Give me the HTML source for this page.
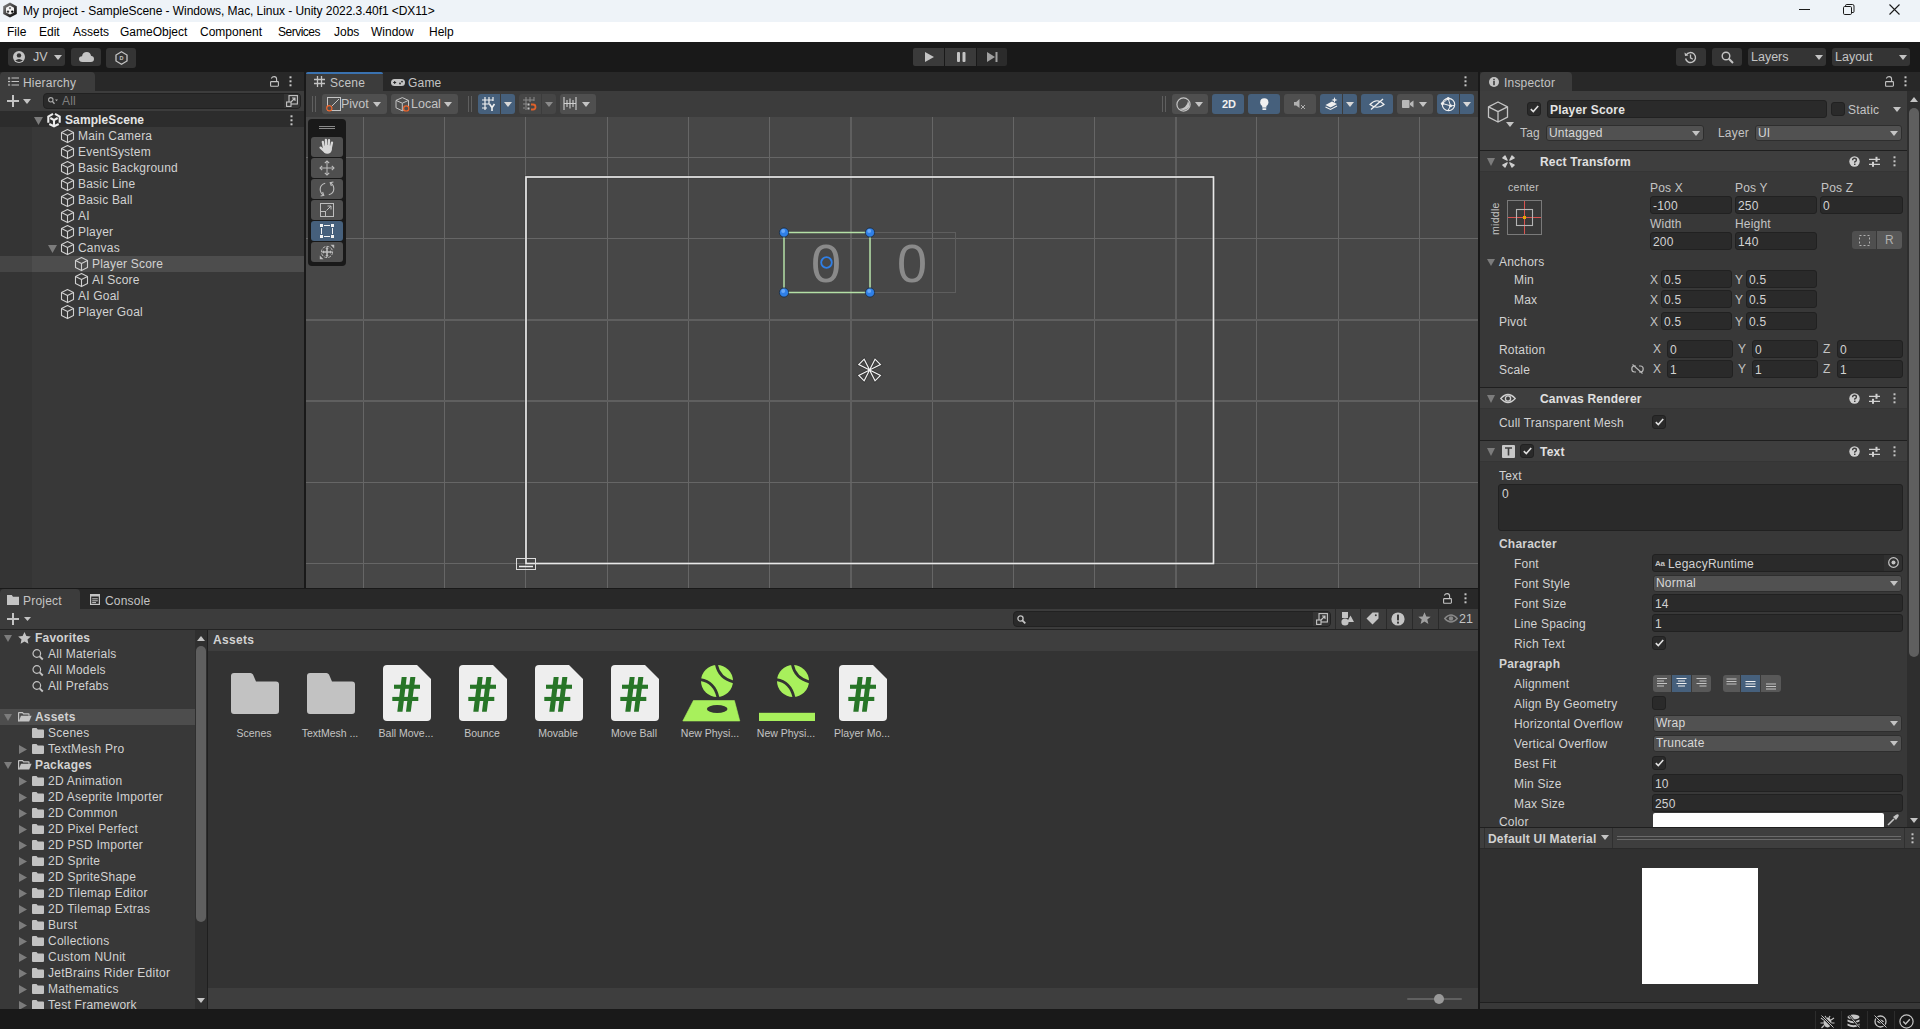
<!DOCTYPE html>
<html><head><meta charset="utf-8">
<style>
*{margin:0;padding:0;box-sizing:border-box}
html,body{width:1920px;height:1029px;overflow:hidden;background:#191919;font-family:"Liberation Sans",sans-serif}
.a{position:absolute}
.t{position:absolute;white-space:nowrap;font-size:12px;line-height:16px;color:#c4c4c4}
.b{font-weight:bold}
.fld{position:absolute;background:#2a2a2a;border:1px solid #212121;border-radius:3px}
.btn{position:absolute;background:#585858;border-radius:3px}
.dd{position:absolute;background:#515151;border:1px solid #2e2e2e;border-radius:3px}
.chk{position:absolute;width:14px;height:14px;background:#2a2a2a;border:1px solid #212121;border-radius:3px}
svg{position:absolute;overflow:visible}
</style></head><body>
<!-- title bar -->
<div class="a" style="left:0;top:0;width:1920px;height:22px;background:#eef3f8"></div>
<!-- menu bar -->
<div class="a" style="left:0;top:22px;width:1920px;height:20px;background:#ffffff"></div>
<!-- main toolbar -->
<div class="a" style="left:0;top:42px;width:1920px;height:30px;background:#191919"></div>

<!-- title content -->
<svg style="left:3px;top:2px" width="15" height="16" viewBox="0 0 15 16"><defs><linearGradient id="hg" x1="0" y1="0" x2="1" y2="1"><stop offset="0" stop-color="#8a8a8a"/><stop offset="0.55" stop-color="#3a3a3a"/><stop offset="1" stop-color="#000"/></linearGradient></defs><polygon points="7,0.6 13.8,4.3 13.8,11.9 7,15.6 0.2,11.9 0.2,4.3" fill="url(#hg)"/><polygon points="7,3.5 11,5.8 11,10.4 7,12.6 3,10.4 3,5.8" fill="#f2f2f2"/><circle cx="7" cy="6.2" r="1.1" fill="#777"/><circle cx="5" cy="9.6" r="1.2" fill="#333"/><circle cx="9.3" cy="9.6" r="1.2" fill="#000"/></svg>
<div class="t" style="left:23px;top:3px;font-size:12px;color:#000;letter-spacing:-0.06px">My project - SampleScene - Windows, Mac, Linux - Unity 2022.3.40f1 &lt;DX11&gt;</div>
<svg style="left:1799px;top:9px" width="11" height="1"><rect width="11" height="1" fill="#1a1a1a"/></svg>
<svg style="left:1843px;top:4px" width="12" height="11" viewBox="0 0 12 11"><rect x="0.5" y="2.5" width="8" height="8" rx="1.2" fill="none" stroke="#1a1a1a"/><path d="M2.5 2.5 V1.8 Q2.5 0.5 3.8 0.5 H9.5 Q11 0.5 11 2 V7.5 Q11 8.5 10 8.5 H8.5" fill="none" stroke="#1a1a1a"/></svg>
<svg style="left:1889px;top:4px" width="11" height="11" viewBox="0 0 11 11"><path d="M0.5 0.5 L10.5 10.5 M10.5 0.5 L0.5 10.5" stroke="#1a1a1a" stroke-width="1.1"/></svg>
<!-- menu -->
<div class="t" style="left:7px;top:24px;font-size:12px;color:#000">File</div>
<div class="t" style="left:39px;top:24px;font-size:12px;color:#000">Edit</div>
<div class="t" style="left:73px;top:24px;font-size:12px;color:#000">Assets</div>
<div class="t" style="left:120px;top:24px;font-size:12px;color:#000">GameObject</div>
<div class="t" style="left:200px;top:24px;font-size:12px;color:#000">Component</div>
<div class="t" style="left:278px;top:24px;font-size:12px;color:#000;letter-spacing:-0.5px">Services</div>
<div class="t" style="left:334px;top:24px;font-size:12px;color:#000">Jobs</div>
<div class="t" style="left:371px;top:24px;font-size:12px;color:#000">Window</div>
<div class="t" style="left:429px;top:24px;font-size:12px;color:#000">Help</div>
<!-- main toolbar content -->
<div class="btn" style="left:8px;top:48px;width:57px;height:18px;background:#343434"></div>
<svg style="left:13px;top:51px" width="12" height="12" viewBox="0 0 12 12"><circle cx="6" cy="6" r="6" fill="#c4c4c4"/><circle cx="6" cy="4.4" r="2.2" fill="#343434"/><path d="M2.2 9.6 Q6 6.2 9.8 9.6 Q6 12.5 2.2 9.6Z" fill="#343434"/></svg>
<div class="t" style="left:33px;top:49px;color:#c4c4c4;font-size:12.5px">JV</div>
<svg style="left:54px;top:55px" width="8" height="5"><path d="M0 0 H8 L4 5Z" fill="#c4c4c4"/></svg>
<div class="btn" style="left:71px;top:48px;width:30px;height:18px;background:#343434"></div>
<svg style="left:79px;top:52px" width="15" height="10" viewBox="0 0 15 10"><path d="M3.5 10 Q0 10 0 7 Q0 4.3 3 4.2 Q3.8 0 7.8 0 Q11.5 0 12 3.8 Q15 4.3 15 7 Q15 10 11.8 10Z" fill="#c4c4c4"/></svg>
<div class="btn" style="left:106px;top:48px;width:30px;height:20px;background:#343434"></div>
<svg style="left:115px;top:51px" width="13" height="14" viewBox="0 0 13 14"><polygon points="6.5,0.8 12,4 12,10 6.5,13.2 1,10 1,4" fill="none" stroke="#c4c4c4" stroke-width="1.3"/><text x="6.5" y="9.3" font-size="5.5" font-family="Liberation Sans" font-weight="bold" fill="#c4c4c4" text-anchor="middle">D</text></svg>
<!-- play controls -->
<div class="a" style="left:913px;top:48px;width:31px;height:18px;background:#3a3a3a;border-radius:2px 0 0 2px"></div>
<div class="a" style="left:945px;top:48px;width:31px;height:18px;background:#3a3a3a"></div>
<div class="a" style="left:977px;top:48px;width:30px;height:18px;background:#2b2b2b;border-radius:0 2px 2px 0"></div>
<svg style="left:925px;top:52px" width="9" height="10"><path d="M0 0 L9 5 L0 10Z" fill="#c4c4c4"/></svg>
<svg style="left:957px;top:52px" width="9" height="10"><rect x="0" y="0" width="3" height="10" rx="1" fill="#c4c4c4"/><rect x="5.5" y="0" width="3" height="10" rx="1" fill="#c4c4c4"/></svg>
<svg style="left:987px;top:52px" width="11" height="10"><path d="M0 0 L8 5 L0 10Z" fill="#a0a0a0"/><rect x="8.5" y="0" width="2" height="10" fill="#a0a0a0"/></svg>
<!-- right toolbar -->
<div class="btn" style="left:1676px;top:48px;width:30px;height:18px;background:#343434"></div>
<svg style="left:1684px;top:51px" width="13" height="13" viewBox="0 0 13 13"><path d="M2.2 4 A5 5 0 1 1 1.6 7.5" fill="none" stroke="#c4c4c4" stroke-width="1.4"/><path d="M0.5 1.5 L1 5 L4.5 4.5Z" fill="#c4c4c4"/><path d="M6.5 3.5 V6.8 L8.8 8.3" fill="none" stroke="#c4c4c4" stroke-width="1.3"/></svg>
<div class="btn" style="left:1712px;top:48px;width:30px;height:18px;background:#343434"></div>
<svg style="left:1721px;top:51px" width="13" height="13" viewBox="0 0 13 13"><circle cx="5" cy="5" r="3.8" fill="none" stroke="#c4c4c4" stroke-width="1.4"/><path d="M7.8 7.8 L12 12" stroke="#c4c4c4" stroke-width="2"/></svg>
<div class="btn" style="left:1748px;top:48px;width:78px;height:18px;background:#343434"></div>
<div class="t" style="left:1751px;top:49px;font-size:12.5px">Layers</div>
<svg style="left:1815px;top:55px" width="8" height="5"><path d="M0 0 H8 L4 5Z" fill="#c4c4c4"/></svg>
<div class="btn" style="left:1832px;top:48px;width:78px;height:18px;background:#343434"></div>
<div class="t" style="left:1835px;top:49px;font-size:12.5px">Layout</div>
<svg style="left:1899px;top:55px" width="8" height="5"><path d="M0 0 H8 L4 5Z" fill="#c4c4c4"/></svg>

<!-- HIERARCHY -->
<div class="a" style="left:0;top:72px;width:304px;height:19px;background:#282828"></div>
<div class="a" style="left:0;top:72px;width:95px;height:19px;background:#3c3c3c;border-radius:4px 4px 0 0"></div>
<div class="a" style="left:0;top:91px;width:304px;height:20px;background:#3c3c3c"></div>
<div class="a" style="left:0;top:111px;width:304px;height:477px;background:#383838"></div>

<!-- hierarchy content -->
<svg style="left:8px;top:77px" width="11" height="9" viewBox="0 0 11 9"><path d="M3.5 1 H11 M3.5 4.5 H11 M3.5 8 H11" stroke="#c4c4c4" stroke-width="1.1"/><path d="M1 0 V9" stroke="#c4c4c4" stroke-width="0.8" stroke-dasharray="1 1.2"/><path d="M0 1.2 H2.2 M0 4.5 H2.2 M0 8 H2.2" stroke="#c4c4c4" stroke-width="1"/></svg>
<div class="t" style="left:23px;top:75px;letter-spacing:0.2px">Hierarchy</div>
<svg style="left:270px;top:76px" width="9" height="11" viewBox="0 0 9 11"><path d="M1.3 2.4 Q2.2 0.6 4.2 0.6 Q6.6 0.6 6.6 3 V5.6" fill="none" stroke="#c4c4c4" stroke-width="1.1"/><rect x="0.6" y="5.6" width="7.8" height="4.6" rx="0.6" fill="none" stroke="#c4c4c4" stroke-width="1.1"/></svg>
<svg style="left:289px;top:76px" width="3" height="11"><rect x="0.5" y="0.3" width="2" height="2" fill="#c4c4c4"/><rect x="0.5" y="4.3" width="2" height="2" fill="#c4c4c4"/><rect x="0.5" y="8.3" width="2" height="2" fill="#c4c4c4"/></svg>
<svg style="left:7px;top:95px" width="12" height="12"><path d="M6 0 V12 M0 6 H12" stroke="#c4c4c4" stroke-width="2"/></svg>
<svg style="left:23px;top:99px" width="8" height="5"><path d="M0 0 H8 L4 5Z" fill="#c4c4c4"/></svg>
<div class="fld" style="left:43px;top:93px;width:258px;height:16px;border-radius:4px"></div>
<svg style="left:48px;top:97px" width="10" height="8" viewBox="0 0 10 8"><circle cx="2.8" cy="2.8" r="2.2" fill="none" stroke="#aaa" stroke-width="1.1"/><path d="M4.3 4.3 L6.5 6.8" stroke="#aaa" stroke-width="1.3"/><path d="M7 2.5 H10 L8.5 4.3Z" fill="#aaa"/></svg>
<div class="t" style="left:62px;top:93px;color:#7f7f7f;letter-spacing:0.2px">All</div>
<div class="a" style="left:284px;top:94px;width:16px;height:14px;background:#353535;border-radius:0 3px 3px 0"></div>
<svg style="left:286px;top:95px" width="12" height="12" viewBox="0 0 12 12"><rect x="3" y="0.6" width="8.4" height="8.4" fill="none" stroke="#c4c4c4" stroke-width="1.1"/><rect x="0.6" y="7" width="4.4" height="4.4" fill="#353535" stroke="#c4c4c4" stroke-width="1.1"/><path d="M5 7 L9 3 M6 3 H9 V6" fill="none" stroke="#c4c4c4" stroke-width="1.1"/></svg>
<div class="a" style="left:0;top:111px;width:304px;height:16px;background:#2c2c2c"></div>
<div class="a" style="left:0;top:127px;width:32px;height:461px;background:#343434"></div>
<div class="a" style="left:0;top:256px;width:32px;height:16px;background:#454545"></div>
<div class="a" style="left:32px;top:256px;width:272px;height:16px;background:#4d4d4d"></div>
<svg style="left:34px;top:117px" width="9" height="8"><path d="M0 0 H9 L4.5 8Z" fill="#7c7c7c"/></svg>
<svg style="left:47px;top:113px" width="14" height="14" viewBox="0 0 14 14"><g fill="none" stroke="#ececec" stroke-width="2.1" stroke-linejoin="miter" stroke-linecap="butt"><path d="M6 0.9 L1.3 3.5 V9.8"/><path d="M8 0.9 L12.7 3.5 V9.8"/><path d="M2.3 11 L7 13.3 L11.7 11"/><path d="M7 12.6 V7.2 L3.3 5 M7 7.2 L10.7 5"/></g></svg>
<div class="t b" style="left:65px;top:112px;color:#e4e4e4;letter-spacing:0.1px">SampleScene</div>
<svg style="left:290px;top:115px" width="3" height="11"><rect x="0.5" y="0.3" width="2" height="2" fill="#c4c4c4"/><rect x="0.5" y="4.3" width="2" height="2" fill="#c4c4c4"/><rect x="0.5" y="8.3" width="2" height="2" fill="#c4c4c4"/></svg>
<svg style="left:61px;top:129px" width="14" height="15" viewBox="0 0 14 15"><path d="M6.5 0.6 L12.5 3.6 V10.6 L6.5 13.6 L0.5 10.6 V3.6 Z M0.5 3.6 L6.5 6.6 L12.5 3.6 M6.5 6.6 V13.6" fill="none" stroke="#d0d0d0" stroke-width="1.1" stroke-linejoin="round"/></svg>
<div class="t" style="left:78px;top:128px;color:#d2d2d2;letter-spacing:0.2px">Main Camera</div>
<svg style="left:61px;top:145px" width="14" height="15" viewBox="0 0 14 15"><path d="M6.5 0.6 L12.5 3.6 V10.6 L6.5 13.6 L0.5 10.6 V3.6 Z M0.5 3.6 L6.5 6.6 L12.5 3.6 M6.5 6.6 V13.6" fill="none" stroke="#d0d0d0" stroke-width="1.1" stroke-linejoin="round"/></svg>
<div class="t" style="left:78px;top:144px;color:#d2d2d2;letter-spacing:0.2px">EventSystem</div>
<svg style="left:61px;top:161px" width="14" height="15" viewBox="0 0 14 15"><path d="M6.5 0.6 L12.5 3.6 V10.6 L6.5 13.6 L0.5 10.6 V3.6 Z M0.5 3.6 L6.5 6.6 L12.5 3.6 M6.5 6.6 V13.6" fill="none" stroke="#d0d0d0" stroke-width="1.1" stroke-linejoin="round"/></svg>
<div class="t" style="left:78px;top:160px;color:#d2d2d2;letter-spacing:0.2px">Basic Background</div>
<svg style="left:61px;top:177px" width="14" height="15" viewBox="0 0 14 15"><path d="M6.5 0.6 L12.5 3.6 V10.6 L6.5 13.6 L0.5 10.6 V3.6 Z M0.5 3.6 L6.5 6.6 L12.5 3.6 M6.5 6.6 V13.6" fill="none" stroke="#d0d0d0" stroke-width="1.1" stroke-linejoin="round"/></svg>
<div class="t" style="left:78px;top:176px;color:#d2d2d2;letter-spacing:0.2px">Basic Line</div>
<svg style="left:61px;top:193px" width="14" height="15" viewBox="0 0 14 15"><path d="M6.5 0.6 L12.5 3.6 V10.6 L6.5 13.6 L0.5 10.6 V3.6 Z M0.5 3.6 L6.5 6.6 L12.5 3.6 M6.5 6.6 V13.6" fill="none" stroke="#d0d0d0" stroke-width="1.1" stroke-linejoin="round"/></svg>
<div class="t" style="left:78px;top:192px;color:#d2d2d2;letter-spacing:0.2px">Basic Ball</div>
<svg style="left:61px;top:209px" width="14" height="15" viewBox="0 0 14 15"><path d="M6.5 0.6 L12.5 3.6 V10.6 L6.5 13.6 L0.5 10.6 V3.6 Z M0.5 3.6 L6.5 6.6 L12.5 3.6 M6.5 6.6 V13.6" fill="none" stroke="#d0d0d0" stroke-width="1.1" stroke-linejoin="round"/></svg>
<div class="t" style="left:78px;top:208px;color:#d2d2d2;letter-spacing:0.2px">AI</div>
<svg style="left:61px;top:225px" width="14" height="15" viewBox="0 0 14 15"><path d="M6.5 0.6 L12.5 3.6 V10.6 L6.5 13.6 L0.5 10.6 V3.6 Z M0.5 3.6 L6.5 6.6 L12.5 3.6 M6.5 6.6 V13.6" fill="none" stroke="#d0d0d0" stroke-width="1.1" stroke-linejoin="round"/></svg>
<div class="t" style="left:78px;top:224px;color:#d2d2d2;letter-spacing:0.2px">Player</div>
<svg style="left:61px;top:241px" width="14" height="15" viewBox="0 0 14 15"><path d="M6.5 0.6 L12.5 3.6 V10.6 L6.5 13.6 L0.5 10.6 V3.6 Z M0.5 3.6 L6.5 6.6 L12.5 3.6 M6.5 6.6 V13.6" fill="none" stroke="#d0d0d0" stroke-width="1.1" stroke-linejoin="round"/></svg>
<div class="t" style="left:78px;top:240px;color:#d2d2d2;letter-spacing:0.2px">Canvas</div>
<svg style="left:75px;top:257px" width="14" height="15" viewBox="0 0 14 15"><path d="M6.5 0.6 L12.5 3.6 V10.6 L6.5 13.6 L0.5 10.6 V3.6 Z M0.5 3.6 L6.5 6.6 L12.5 3.6 M6.5 6.6 V13.6" fill="none" stroke="#d0d0d0" stroke-width="1.1" stroke-linejoin="round"/></svg>
<div class="t" style="left:92px;top:256px;color:#d2d2d2;letter-spacing:0.2px">Player Score</div>
<svg style="left:75px;top:273px" width="14" height="15" viewBox="0 0 14 15"><path d="M6.5 0.6 L12.5 3.6 V10.6 L6.5 13.6 L0.5 10.6 V3.6 Z M0.5 3.6 L6.5 6.6 L12.5 3.6 M6.5 6.6 V13.6" fill="none" stroke="#d0d0d0" stroke-width="1.1" stroke-linejoin="round"/></svg>
<div class="t" style="left:92px;top:272px;color:#d2d2d2;letter-spacing:0.2px">AI Score</div>
<svg style="left:61px;top:289px" width="14" height="15" viewBox="0 0 14 15"><path d="M6.5 0.6 L12.5 3.6 V10.6 L6.5 13.6 L0.5 10.6 V3.6 Z M0.5 3.6 L6.5 6.6 L12.5 3.6 M6.5 6.6 V13.6" fill="none" stroke="#d0d0d0" stroke-width="1.1" stroke-linejoin="round"/></svg>
<div class="t" style="left:78px;top:288px;color:#d2d2d2;letter-spacing:0.2px">AI Goal</div>
<svg style="left:61px;top:305px" width="14" height="15" viewBox="0 0 14 15"><path d="M6.5 0.6 L12.5 3.6 V10.6 L6.5 13.6 L0.5 10.6 V3.6 Z M0.5 3.6 L6.5 6.6 L12.5 3.6 M6.5 6.6 V13.6" fill="none" stroke="#d0d0d0" stroke-width="1.1" stroke-linejoin="round"/></svg>
<div class="t" style="left:78px;top:304px;color:#d2d2d2;letter-spacing:0.2px">Player Goal</div>
<svg style="left:48px;top:245px" width="9" height="8"><path d="M0 0 H9 L4.5 8Z" fill="#7c7c7c"/></svg>

<!-- SCENE -->
<div class="a" style="left:306px;top:72px;width:1172px;height:19px;background:#282828"></div>
<div class="a" style="left:306px;top:72px;width:77px;height:19px;background:#3c3c3c;border-radius:4px 4px 0 0"></div>
<div class="a" style="left:306px;top:91px;width:1172px;height:25px;background:#3c3c3c"></div>
<div class="a" style="left:306px;top:116px;width:1172px;height:472px;background:#474747"></div>

<!-- scene tabs -->
<div class="a" style="left:306px;top:72px;width:77px;height:2px;background:#3a72b0;border-radius:3px 3px 0 0"></div>
<svg style="left:314px;top:76px" width="11" height="11" viewBox="0 0 11 11"><path d="M3.5 0 V11 M7.5 0 V11 M0 3.5 H11 M0 7.5 H11" stroke="#c4c4c4" stroke-width="1.3"/></svg>
<div class="t" style="left:330px;top:75px;letter-spacing:0.2px">Scene</div>
<svg style="left:391px;top:79px" width="14" height="7" viewBox="0 0 14 7"><path d="M3.5 0 H10.5 Q14 0 14 3.5 Q14 7 10.5 7 H3.5 Q0 7 0 3.5 Q0 0 3.5 0Z" fill="#c4c4c4"/><path d="M2.2 3.5 H5.2 M3.7 2 V5" stroke="#282828" stroke-width="1"/><circle cx="9" cy="4.5" r="0.9" fill="#282828"/><circle cx="11" cy="2.6" r="0.9" fill="#282828"/></svg>
<div class="t" style="left:408px;top:75px;letter-spacing:0.2px">Game</div>
<svg style="left:1464px;top:76px" width="3" height="11"><rect x="0.5" y="0.3" width="2" height="2" fill="#c4c4c4"/><rect x="0.5" y="4.3" width="2" height="2" fill="#c4c4c4"/><rect x="0.5" y="8.3" width="2" height="2" fill="#c4c4c4"/></svg>
<!-- scene toolbar -->
<svg style="left:312px;top:96px" width="4" height="16"><path d="M0.5 0 V16 M3.5 0 V16" stroke="#5f5f5f" stroke-width="1"/></svg>
<div class="btn" style="left:322px;top:94px;width:65px;height:20px;background:#4f4f4f"></div>
<svg style="left:326px;top:97px" width="15" height="15" viewBox="0 0 15 15"><rect x="1.5" y="0.5" width="13" height="13" fill="none" stroke="#c4c4c4" stroke-width="1"/><path d="M5 10 L13 2" stroke="#c4c4c4" stroke-width="1"/><circle cx="3.3" cy="11.3" r="2.6" fill="#4f4f4f" stroke="#f0652a" stroke-width="1.2"/></svg>
<div class="t" style="left:341px;top:96px;font-size:12.5px">Pivot</div>
<svg style="left:373px;top:102px" width="8" height="5"><path d="M0 0 H8 L4.0 5Z" fill="#c4c4c4"/></svg>
<div class="btn" style="left:391px;top:94px;width:67px;height:20px;background:#4f4f4f"></div>
<svg style="left:395px;top:97px" width="15" height="15" viewBox="0 0 15 15"><path d="M7.3 0.6 L13.5 3.4 V10.8 L7.3 13.8 L1 10.8 V3.4 Z M1 3.4 L7.3 6.2 L13.5 3.4 M7.3 6.2 V13.8" fill="none" stroke="#c4c4c4" stroke-width="1"/><circle cx="11.2" cy="11.4" r="2.6" fill="#4f4f4f" stroke="#f0652a" stroke-width="1.2"/></svg>
<div class="t" style="left:411px;top:96px;font-size:12.5px">Local</div>
<svg style="left:444px;top:102px" width="8" height="5"><path d="M0 0 H8 L4.0 5Z" fill="#c4c4c4"/></svg>
<svg style="left:468px;top:96px" width="4" height="16"><path d="M0.5 0 V16 M3.5 0 V16" stroke="#5f5f5f" stroke-width="1"/></svg>
<div class="a" style="left:478px;top:94px;width:22px;height:20px;background:#46607c;border-radius:3px 0 0 3px"></div>
<div class="a" style="left:501px;top:94px;width:14px;height:20px;background:#46607c;border-radius:0 3px 3px 0"></div>
<svg style="left:482px;top:97px" width="14" height="14" viewBox="0 0 14 14"><path d="M3 0 V13 M7 0 V7 M11 0 V4 M0 3 H11 M0 7 H7 M0 11 H5" stroke="#f0f0f0" stroke-width="1.2"/><path d="M7.5 7 L10 10.5 L12.5 7 M10 10.5 V14" fill="none" stroke="#f0f0f0" stroke-width="1.6"/></svg>
<svg style="left:504px;top:102px" width="8" height="5"><path d="M0 0 H8 L4.0 5Z" fill="#d8d8d8"/></svg>
<div class="a" style="left:519px;top:94px;width:22px;height:20px;background:#464646;border-radius:3px 0 0 3px"></div>
<div class="a" style="left:542px;top:94px;width:14px;height:20px;background:#464646;border-radius:0 3px 3px 0"></div>
<svg style="left:523px;top:97px" width="14" height="14" viewBox="0 0 14 14"><path d="M3 0 V13 M7 0 V5 M11 0 V4 M0 3 H11 M0 7 H4 M0 11 H2" stroke="#8a8a8a" stroke-width="1"/><rect x="4.5" y="6.5" width="2" height="2" fill="#c4c4c4"/><rect x="4.5" y="10.5" width="2" height="2" fill="#c4c4c4"/><path d="M8 7.5 H10 Q12.5 7.5 12.5 10 Q12.5 12.5 10 12.5 H8" fill="none" stroke="#e0612a" stroke-width="1.8"/></svg>
<svg style="left:545px;top:102px" width="8" height="5"><path d="M0 0 H8 L4.0 5Z" fill="#8a8a8a"/></svg>
<div class="btn" style="left:560px;top:94px;width:36px;height:20px;background:#4f4f4f"></div>
<svg style="left:563px;top:97px" width="14" height="14" viewBox="0 0 14 14"><path d="M1 0 V13 M13 0 V13 M4 3 V10 M7 1.5 V11.5 M10 3 V10 M1 6.5 H13" stroke="#d0d0d0" stroke-width="1.1"/></svg>
<svg style="left:582px;top:102px" width="8" height="5"><path d="M0 0 H8 L4.0 5Z" fill="#c4c4c4"/></svg>
<!-- scene right toolbar -->
<svg style="left:1162px;top:96px" width="4" height="16"><path d="M0.5 0 V16 M3.5 0 V16" stroke="#5f5f5f" stroke-width="1"/></svg>
<div class="btn" style="left:1172px;top:94px;width:36px;height:20px;background:#4f4f4f"></div>
<svg style="left:1176px;top:97px" width="15" height="15" viewBox="0 0 15 15"><circle cx="7.5" cy="7.5" r="6.6" fill="none" stroke="#c4c4c4" stroke-width="1.2"/><path d="M3 12 Q11 11 12 4 Q14.5 8 12.5 11 Q9 14.5 3 12Z" fill="#c4c4c4"/></svg>
<svg style="left:1195px;top:102px" width="8" height="5"><path d="M0 0 H8 L4.0 5Z" fill="#c4c4c4"/></svg>
<div class="a" style="left:1212px;top:94px;width:32px;height:20px;background:#46607c;border-radius:3px"></div>
<div class="t b" style="left:1222px;top:96px;font-size:11px;color:#f0f0f0">2D</div>
<div class="a" style="left:1248px;top:94px;width:32px;height:20px;background:#46607c;border-radius:3px"></div>
<svg style="left:1260px;top:97px" width="9" height="14" viewBox="0 0 9 14"><circle cx="4.3" cy="5.3" r="4.1" fill="#f0f0f0"/><path d="M2.2 7 H6.4 V10.6 H2.2Z" fill="#f0f0f0"/><rect x="2.2" y="11.2" width="4.2" height="1.8" rx="0.9" fill="#f0f0f0"/></svg>
<div class="btn" style="left:1284px;top:94px;width:32px;height:20px;background:#4f4f4f"></div>
<svg style="left:1294px;top:99px" width="12" height="11" viewBox="0 0 12 11"><path d="M0 3 H2.2 L5.5 0 V9 L2.2 6.5 H0Z" fill="#b0b0b0"/><path d="M7 6 L11 10 M11 6 L7 10" stroke="#b0b0b0" stroke-width="1"/></svg>
<div class="a" style="left:1320px;top:94px;width:22px;height:20px;background:#46607c;border-radius:3px 0 0 3px"></div>
<div class="a" style="left:1343px;top:94px;width:14px;height:20px;background:#46607c;border-radius:0 3px 3px 0"></div>
<svg style="left:1325px;top:97px" width="13" height="13" viewBox="0 0 13 13"><path d="M0.5 8 L5.5 10.5 L12 7 L7 4.5Z" fill="#f0f0f0"/><path d="M0.5 10 L5.5 12.5 L12 9" fill="none" stroke="#f0f0f0" stroke-width="1.1"/><path d="M9.5 0 L10.3 2.2 L12.5 3 L10.3 3.8 L9.5 6 L8.7 3.8 L6.5 3 L8.7 2.2Z" fill="#f0f0f0"/></svg>
<svg style="left:1346px;top:102px" width="8" height="5"><path d="M0 0 H8 L4.0 5Z" fill="#d8d8d8"/></svg>
<div class="a" style="left:1361px;top:94px;width:32px;height:20px;background:#46607c;border-radius:3px"></div>
<svg style="left:1369px;top:98px" width="16" height="12" viewBox="0 0 16 12"><path d="M1 6.5 Q8 -1 15 6.5 Q8 12 1 6.5Z" fill="none" stroke="#f0f0f0" stroke-width="1.2"/><path d="M2 11.5 L14 1" stroke="#f0f0f0" stroke-width="1.3"/></svg>
<div class="btn" style="left:1397px;top:94px;width:36px;height:20px;background:#4f4f4f"></div>
<svg style="left:1402px;top:99px" width="12" height="10" viewBox="0 0 12 10"><rect x="0" y="1" width="7.5" height="8" rx="0.8" fill="#b8b8b8"/><path d="M8 4 L11.5 1.5 V8.5 L8 6Z" fill="#b8b8b8"/></svg>
<svg style="left:1419px;top:102px" width="8" height="5"><path d="M0 0 H8 L4.0 5Z" fill="#c4c4c4"/></svg>
<div class="a" style="left:1437px;top:94px;width:22px;height:20px;background:#46607c;border-radius:3px 0 0 3px"></div>
<div class="a" style="left:1460px;top:94px;width:14px;height:20px;background:#46607c;border-radius:0 3px 3px 0"></div>
<svg style="left:1441px;top:97px" width="15" height="15" viewBox="0 0 15 15"><circle cx="7.5" cy="7.5" r="6.2" fill="none" stroke="#f0f0f0" stroke-width="1.2"/><path d="M7.2 1.5 L9.5 8.8 L1.5 6.5 Z M9.5 8.8 L7 13.6 M9.5 8.8 L13.6 8.5" fill="none" stroke="#f0f0f0" stroke-width="1"/><circle cx="7.2" cy="1.6" r="1.6" fill="#f0f0f0"/><circle cx="1.5" cy="6.5" r="1.6" fill="#f0f0f0"/><circle cx="9.5" cy="8.8" r="1.5" fill="#f0f0f0"/></svg>
<svg style="left:1463px;top:102px" width="8" height="5"><path d="M0 0 H8 L4.0 5Z" fill="#d8d8d8"/></svg>
<svg style="left:306px;top:116px" width="1172" height="472"><line x1="57.5" y1="0" x2="57.5" y2="472" stroke="#666666" stroke-width="1"/><line x1="138.5" y1="0" x2="138.5" y2="472" stroke="#666666" stroke-width="1"/><line x1="219.5" y1="0" x2="219.5" y2="472" stroke="#666666" stroke-width="1"/><line x1="301.5" y1="0" x2="301.5" y2="472" stroke="#666666" stroke-width="1"/><line x1="382.5" y1="0" x2="382.5" y2="472" stroke="#666666" stroke-width="1"/><line x1="463.5" y1="0" x2="463.5" y2="472" stroke="#666666" stroke-width="1"/><line x1="545" y1="0" x2="545" y2="472" stroke="#5f5f5f" stroke-width="2"/><line x1="626.5" y1="0" x2="626.5" y2="472" stroke="#666666" stroke-width="1"/><line x1="707.5" y1="0" x2="707.5" y2="472" stroke="#666666" stroke-width="1"/><line x1="788.5" y1="0" x2="788.5" y2="472" stroke="#666666" stroke-width="1"/><line x1="870" y1="0" x2="870" y2="472" stroke="#5f5f5f" stroke-width="2"/><line x1="950.5" y1="0" x2="950.5" y2="472" stroke="#666666" stroke-width="1"/><line x1="1032.5" y1="0" x2="1032.5" y2="472" stroke="#666666" stroke-width="1"/><line x1="1113.5" y1="0" x2="1113.5" y2="472" stroke="#666666" stroke-width="1"/><line x1="0" y1="41.5" x2="1172" y2="41.5" stroke="#666666" stroke-width="1"/><line x1="0" y1="122.5" x2="1172" y2="122.5" stroke="#666666" stroke-width="1"/><line x1="0" y1="204" x2="1172" y2="204" stroke="#5f5f5f" stroke-width="2"/><line x1="0" y1="285" x2="1172" y2="285" stroke="#5f5f5f" stroke-width="2"/><line x1="0" y1="366.5" x2="1172" y2="366.5" stroke="#666666" stroke-width="1"/><line x1="0" y1="447.5" x2="1172" y2="447.5" stroke="#666666" stroke-width="1"/><rect x="220" y="61" width="687.5" height="386.5" fill="none" stroke="#303030" stroke-opacity="0.3" stroke-width="3.6"/><rect x="220" y="61" width="687.5" height="386.5" fill="none" stroke="#e8e8e8" stroke-width="1.7"/><rect x="564.5" y="116.5" width="85" height="60" fill="none" stroke="#5e5e5e" stroke-width="1"/><text x="520" y="166" font-family="Liberation Sans" font-size="54" fill="#8a8a8a" text-anchor="middle">0</text><text x="606" y="166" font-family="Liberation Sans" font-size="54" fill="#8a8a8a" text-anchor="middle">0</text><rect x="478" y="116.5" width="86" height="60" fill="none" stroke="#b4e0a6" stroke-width="1.5"/><circle cx="478" cy="116.5" r="4.6" fill="#2f7fe6" stroke="#1a2a3a" stroke-width="0.8"/><circle cx="477.2" cy="115.0" r="2" fill="#7fb8ff" opacity="0.7"/><circle cx="564" cy="116.5" r="4.6" fill="#2f7fe6" stroke="#1a2a3a" stroke-width="0.8"/><circle cx="563.2" cy="115.0" r="2" fill="#7fb8ff" opacity="0.7"/><circle cx="478" cy="176.5" r="4.6" fill="#2f7fe6" stroke="#1a2a3a" stroke-width="0.8"/><circle cx="477.2" cy="175.0" r="2" fill="#7fb8ff" opacity="0.7"/><circle cx="564" cy="176.5" r="4.6" fill="#2f7fe6" stroke="#1a2a3a" stroke-width="0.8"/><circle cx="563.2" cy="175.0" r="2" fill="#7fb8ff" opacity="0.7"/><circle cx="520.5" cy="146.5" r="5.3" fill="none" stroke="#2f7fe6" stroke-width="1.8"/><g transform="translate(563.6,254)" fill="none" stroke-linejoin="miter"><path d="M0 0 L-3.8 -11.5 L3.8 -11.5 Z" transform="rotate(-45)" stroke="#222" stroke-opacity="0.5" stroke-width="2.6"/><path d="M0 0 L-3.8 -11.5 L3.8 -11.5 Z" transform="rotate(45)" stroke="#222" stroke-opacity="0.5" stroke-width="2.6"/><path d="M0 0 L-3.8 -11.5 L3.8 -11.5 Z" transform="rotate(135)" stroke="#222" stroke-opacity="0.5" stroke-width="2.6"/><path d="M0 0 L-3.8 -11.5 L3.8 -11.5 Z" transform="rotate(225)" stroke="#222" stroke-opacity="0.5" stroke-width="2.6"/><path d="M0 0 L-3.8 -11.5 L3.8 -11.5 Z" transform="rotate(-45)" stroke="#f2f2f2" stroke-width="1.2"/><path d="M0 0 L-3.8 -11.5 L3.8 -11.5 Z" transform="rotate(45)" stroke="#f2f2f2" stroke-width="1.2"/><path d="M0 0 L-3.8 -11.5 L3.8 -11.5 Z" transform="rotate(135)" stroke="#f2f2f2" stroke-width="1.2"/><path d="M0 0 L-3.8 -11.5 L3.8 -11.5 Z" transform="rotate(225)" stroke="#f2f2f2" stroke-width="1.2"/></g><rect x="210.5" y="442.5" width="19" height="11" fill="none" stroke="#dcdcdc" stroke-width="1"/><path d="M213 450.5 H227" stroke="#eee" stroke-width="1.5"/></svg>
<div class="a" style="left:306px;top:116px;width:1172px;height:1px;background:#3c3c3c"></div>
<div class="a" style="left:308px;top:119px;width:38px;height:147px;background:#191919;border-radius:4px"></div>
<svg style="left:319px;top:126px" width="16" height="3"><path d="M0 0.5 H16 M0 2.5 H16" stroke="#8a8a8a" stroke-width="1"/></svg>
<div class="a" style="left:311px;top:137px;width:32px;height:20px;background:#4f4f4f;border-radius:3px"></div>
<div class="a" style="left:311px;top:158px;width:32px;height:20px;background:#4f4f4f;border-radius:3px"></div>
<div class="a" style="left:311px;top:179px;width:32px;height:20px;background:#4f4f4f;border-radius:3px"></div>
<div class="a" style="left:311px;top:200px;width:32px;height:20px;background:#4f4f4f;border-radius:3px"></div>
<div class="a" style="left:311px;top:221px;width:32px;height:20px;background:#46607c;border-radius:3px"></div>
<div class="a" style="left:311px;top:242px;width:32px;height:20px;background:#4f4f4f;border-radius:3px"></div>
<svg style="left:319px;top:138px" width="16" height="17" viewBox="0 0 16 17"><ellipse cx="8.3" cy="11.3" rx="4.6" ry="4.4" fill="#d8d8d8"/><g stroke="#d8d8d8" stroke-width="2.3" stroke-linecap="round"><path d="M5 10 L3.8 3.8"/><path d="M7.2 9 L6.9 1.8"/><path d="M9.6 9 L10 2.2"/><path d="M11.8 10 L13 4.6"/><path d="M4.6 12.5 L1.6 9.6"/></g></svg>
<svg style="left:319px;top:160px" width="16" height="16" viewBox="0 0 16 16"><path d="M8 1 V15 M1 8 H15" stroke="#bdbdbd" stroke-width="1"/><path d="M5.8 3.2 L8 1 L10.2 3.2 M5.8 12.8 L8 15 L10.2 12.8 M3.2 5.8 L1 8 L3.2 10.2 M12.8 5.8 L15 8 L12.8 10.2" fill="none" stroke="#bdbdbd" stroke-width="1.1"/></svg>
<svg style="left:319px;top:181px" width="16" height="16" viewBox="0 0 16 16"><path d="M6.2 2.2 Q1.2 3.6 1.2 8.2 Q1.2 12.2 4.8 14.2" fill="none" stroke="#bdbdbd" stroke-width="1.1"/><path d="M9.8 13.8 Q14.8 12.4 14.8 7.8 Q14.8 3.8 11.2 1.8" fill="none" stroke="#bdbdbd" stroke-width="1.1"/><path d="M3.6 11 L4.8 14.4 L1.6 15" fill="none" stroke="#bdbdbd" stroke-width="1.1"/><path d="M12.4 5 L11.2 1.6 L14.4 1" fill="none" stroke="#bdbdbd" stroke-width="1.1"/></svg>
<svg style="left:320px;top:203px" width="14" height="14" viewBox="0 0 14 14"><rect x="0.5" y="0.5" width="13" height="13" fill="none" stroke="#bdbdbd" stroke-width="1"/><rect x="0.5" y="8.5" width="5" height="5" fill="none" stroke="#bdbdbd" stroke-width="1"/><path d="M6.5 7.5 L11 3 M7.5 3 H11 V6.5" fill="none" stroke="#bdbdbd" stroke-width="1"/></svg>
<svg style="left:319px;top:223px" width="16" height="16" viewBox="0 0 16 16"><g fill="#f2f2f2"><rect x="1" y="1" width="3" height="3"/><rect x="12" y="1" width="3" height="3"/><rect x="1" y="12" width="3" height="3"/><rect x="12" y="12" width="3" height="3"/></g><path d="M5 2.5 H11 M5 13.5 H11 M2.5 5 V11 M13.5 5 V11" stroke="#f2f2f2" stroke-width="1"/></svg>
<svg style="left:319px;top:244px" width="16" height="16" viewBox="0 0 16 16"><circle cx="8" cy="8" r="5.6" fill="none" stroke="#bdbdbd" stroke-width="1" stroke-dasharray="3 1.2"/><path d="M8 3.5 V12.5 M3.5 8 H12.5" stroke="#bdbdbd" stroke-width="1.6"/><path d="M6.3 5 L8 3 L9.7 5Z M6.3 11 L8 13 L9.7 11Z M5 6.3 L3 8 L5 9.7Z M11 6.3 L13 8 L11 9.7Z" fill="#bdbdbd"/><path d="M11.5 0.8 H15.2 V4.5Z M0.8 11.5 V15.2 H4.5Z" fill="#bdbdbd"/></svg>
<!-- PROJECT -->
<div class="a" style="left:0;top:589px;width:1478px;height:20px;background:#282828"></div>
<div class="a" style="left:0;top:589px;width:80px;height:20px;background:#3c3c3c;border-radius:4px 4px 0 0"></div>
<div class="a" style="left:0;top:609px;width:1478px;height:20px;background:#3c3c3c"></div>
<div class="a" style="left:0;top:630px;width:195px;height:379px;background:#383838"></div>
<div class="a" style="left:208px;top:630px;width:1270px;height:21px;background:#3e3e3e"></div>
<div class="a" style="left:208px;top:651px;width:1270px;height:337px;background:#333333"></div>
<div class="a" style="left:208px;top:988px;width:1270px;height:21px;background:#3e3e3e"></div>

<!-- project tabs -->
<svg style="left:7px;top:595px" width="12" height="10" viewBox="0 0 12 10"><path d="M0 0 H4.8 L6 1.8 H12 V10 H0Z" fill="#c4c4c4"/></svg>
<div class="t" style="left:23px;top:593px;letter-spacing:0.2px">Project</div>
<svg style="left:90px;top:594px" width="10" height="11" viewBox="0 0 10 11"><rect x="0.6" y="0.6" width="8.8" height="9.8" fill="none" stroke="#c4c4c4" stroke-width="1.2"/><rect x="0" y="0" width="10" height="2.5" fill="#c4c4c4"/><path d="M2.2 4.8 H7.8 M2.2 6.8 H7.8 M2.2 8.6 H6" stroke="#c4c4c4" stroke-width="1"/></svg>
<div class="t" style="left:105px;top:593px;letter-spacing:0.2px">Console</div>
<svg style="left:1443px;top:593px" width="9" height="11" viewBox="0 0 9 11"><path d="M1.3 2.4 Q2.2 0.6 4.2 0.6 Q6.6 0.6 6.6 3 V5.6" fill="none" stroke="#c4c4c4" stroke-width="1.1"/><rect x="0.6" y="5.6" width="7.8" height="4.6" rx="0.6" fill="none" stroke="#c4c4c4" stroke-width="1.1"/></svg><svg style="left:1464px;top:593px" width="3" height="11"><rect x="0.5" y="0.3" width="2" height="2" fill="#c4c4c4"/><rect x="0.5" y="4.3" width="2" height="2" fill="#c4c4c4"/><rect x="0.5" y="8.3" width="2" height="2" fill="#c4c4c4"/></svg>
<svg style="left:7px;top:613px" width="12" height="12"><path d="M6 0 V12 M0 6 H12" stroke="#c4c4c4" stroke-width="2"/></svg>
<svg style="left:24px;top:617px" width="7" height="4"><path d="M0 0 H7 L3.5 4Z" fill="#c4c4c4"/></svg>
<div class="fld" style="left:1013px;top:611px;width:318px;height:16px;border-radius:4px"></div>
<svg style="left:1017px;top:615px" width="9" height="9" viewBox="0 0 9 9"><circle cx="3.5" cy="3.5" r="2.6" fill="none" stroke="#c4c4c4" stroke-width="1.3"/><path d="M5.3 5.3 L8.3 8.3" stroke="#c4c4c4" stroke-width="1.8"/></svg>
<div class="a" style="left:1313px;top:612px;width:17px;height:14px;background:#353535;border-radius:0 3px 3px 0"></div>
<svg style="left:1316px;top:613px" width="12" height="12" viewBox="0 0 12 12"><rect x="3" y="0.6" width="8.4" height="8.4" fill="none" stroke="#c4c4c4" stroke-width="1.1"/><rect x="0.6" y="7" width="4.4" height="4.4" fill="#353535" stroke="#c4c4c4" stroke-width="1.1"/><path d="M5 7 L9 3 M6 3 H9 V6" fill="none" stroke="#c4c4c4" stroke-width="1.1"/></svg>
<div class="a" style="left:1335px;top:609px;width:1px;height:20px;background:#2a2a2a"></div>
<svg style="left:1341px;top:612px" width="13" height="14" viewBox="0 0 13 14"><rect x="1" y="0" width="6" height="6" fill="#c4c4c4"/><circle cx="4" cy="10" r="3.6" fill="#c4c4c4"/><path d="M9.5 3.5 L13 10 H6Z" fill="#c4c4c4"/></svg>
<div class="a" style="left:1360px;top:609px;width:1px;height:20px;background:#2a2a2a"></div>
<svg style="left:1366px;top:612px" width="13" height="13" viewBox="0 0 13 13"><path d="M6.5 0.5 H12.5 V6.5 L6.5 12.5 L0.5 6.5Z" fill="#c4c4c4"/><circle cx="9.8" cy="3.2" r="1" fill="#3c3c3c"/></svg>
<div class="a" style="left:1386px;top:609px;width:1px;height:20px;background:#2a2a2a"></div>
<svg style="left:1391px;top:612px" width="14" height="14" viewBox="0 0 14 14"><circle cx="7" cy="7" r="6.6" fill="#c4c4c4"/><rect x="6" y="2.6" width="2" height="5.8" fill="#3c3c3c"/><rect x="6" y="9.6" width="2" height="2" fill="#3c3c3c"/></svg>
<div class="a" style="left:1412px;top:609px;width:1px;height:20px;background:#2a2a2a"></div>
<svg style="left:1418px;top:612px" width="13" height="13" viewBox="0 0 13 13"><path d="M6.5 0.3 L8.3 4.4 L12.7 4.7 L9.3 7.6 L10.4 12 L6.5 9.6 L2.6 12 L3.7 7.6 L0.3 4.7 L4.7 4.4Z" fill="#a0a0a0"/></svg>
<div class="a" style="left:1438px;top:609px;width:1px;height:20px;background:#2a2a2a"></div>
<svg style="left:1444px;top:614px" width="14" height="9" viewBox="0 0 14 9"><path d="M0.7 4.5 Q7 -2.5 13.3 4.5 Q7 11.5 0.7 4.5Z" fill="none" stroke="#888" stroke-width="1.3"/><circle cx="7" cy="4.5" r="2.2" fill="#888"/></svg>
<div class="t" style="left:1459px;top:611px;color:#c4c4c4;font-size:12.5px">21</div>
<div class="a" style="left:0;top:629px;width:1478px;height:1px;background:#232323"></div>
<!-- project tree -->
<div class="a" style="left:195px;top:630px;width:12px;height:379px;background:#2f2f2f"></div>
<div class="a" style="left:207px;top:630px;width:1px;height:379px;background:#1f1f1f"></div>
<svg style="left:197px;top:636px" width="8" height="5"><path d="M0 5 H8 L4 0Z" fill="#c4c4c4"/></svg>
<div class="a" style="left:196px;top:646px;width:10px;height:276px;background:#5f5f5f;border-radius:5px"></div>
<svg style="left:197px;top:998px" width="8" height="5"><path d="M0 0 H8 L4 5Z" fill="#c4c4c4"/></svg>
<div class="a" style="left:0;top:709px;width:195px;height:16px;background:#4d4d4d"></div>
<svg style="left:4px;top:635px" width="8" height="7"><path d="M0 0 H8 L4.0 7Z" fill="#7c7c7c"/></svg><svg style="left:18px;top:632px" width="13" height="12" viewBox="0 0 13 12"><path d="M6.5 0 L8.4 4 L12.8 4.5 L9.5 7.4 L10.4 11.8 L6.5 9.6 L2.6 11.8 L3.5 7.4 L0.2 4.5 L4.6 4Z" fill="#c4c4c4"/></svg>
<div class="t b" style="left:35px;top:630px;color:#d2d2d2;letter-spacing:0.2px">Favorites</div>
<svg style="left:32px;top:649px" width="12" height="11" viewBox="0 0 12 11"><circle cx="4.8" cy="4.5" r="3.8" fill="none" stroke="#c4c4c4" stroke-width="1.2"/><path d="M7.6 7.3 L10.8 10.5" stroke="#c4c4c4" stroke-width="1.8"/></svg><div class="t" style="left:48px;top:646px;color:#d2d2d2;letter-spacing:0.25px">All Materials</div>
<svg style="left:32px;top:665px" width="12" height="11" viewBox="0 0 12 11"><circle cx="4.8" cy="4.5" r="3.8" fill="none" stroke="#c4c4c4" stroke-width="1.2"/><path d="M7.6 7.3 L10.8 10.5" stroke="#c4c4c4" stroke-width="1.8"/></svg><div class="t" style="left:48px;top:662px;color:#d2d2d2;letter-spacing:0.25px">All Models</div>
<svg style="left:32px;top:681px" width="12" height="11" viewBox="0 0 12 11"><circle cx="4.8" cy="4.5" r="3.8" fill="none" stroke="#c4c4c4" stroke-width="1.2"/><path d="M7.6 7.3 L10.8 10.5" stroke="#c4c4c4" stroke-width="1.8"/></svg><div class="t" style="left:48px;top:678px;color:#d2d2d2;letter-spacing:0.25px">All Prefabs</div>
<svg style="left:4px;top:714px" width="8" height="7"><path d="M0 0 H8 L4.0 7Z" fill="#7c7c7c"/></svg><svg style="left:18px;top:712px" width="14" height="10" viewBox="0 0 14 10"><path d="M0.6 9.4 V1 Q0.6 0.6 1 0.6 H4.5 L5.6 1.8 H10.5 Q11 1.8 11 2.3 V3.8" fill="none" stroke="#c4c4c4" stroke-width="1.2"/><path d="M0.6 9.4 L3 3.8 H13.6 L11.2 9.4Z" fill="#c4c4c4"/></svg><div class="t b" style="left:35px;top:709px;color:#d2d2d2;letter-spacing:0.2px">Assets</div>
<svg style="left:32px;top:728px" width="12" height="10" viewBox="0 0 12 10"><path d="M0 1 Q0 0 1 0 H4.5 L5.8 1.6 H11 Q12 1.6 12 2.6 V9 Q12 10 11 10 H1 Q0 10 0 9Z" fill="#c2c2c2"/></svg><div class="t" style="left:48px;top:725px;color:#d2d2d2;letter-spacing:0.25px">Scenes</div>
<svg style="left:19px;top:745px" width="8" height="9"><path d="M0 0 L8 4.5 L0 9Z" fill="#7c7c7c"/></svg><svg style="left:32px;top:744px" width="12" height="10" viewBox="0 0 12 10"><path d="M0 1 Q0 0 1 0 H4.5 L5.8 1.6 H11 Q12 1.6 12 2.6 V9 Q12 10 11 10 H1 Q0 10 0 9Z" fill="#c2c2c2"/></svg><div class="t" style="left:48px;top:741px;color:#d2d2d2;letter-spacing:0.25px">TextMesh Pro</div>
<svg style="left:4px;top:762px" width="8" height="7"><path d="M0 0 H8 L4.0 7Z" fill="#7c7c7c"/></svg><svg style="left:18px;top:760px" width="14" height="10" viewBox="0 0 14 10"><path d="M0.6 9.4 V1 Q0.6 0.6 1 0.6 H4.5 L5.6 1.8 H10.5 Q11 1.8 11 2.3 V3.8" fill="none" stroke="#c4c4c4" stroke-width="1.2"/><path d="M0.6 9.4 L3 3.8 H13.6 L11.2 9.4Z" fill="#c4c4c4"/></svg><div class="t b" style="left:35px;top:757px;color:#d2d2d2;letter-spacing:0.2px">Packages</div>
<div class="a" style="left:0;top:773px;width:195px;height:236px;overflow:hidden"><svg style="left:19px;top:4px" width="8" height="9"><path d="M0 0 L8 4.5 L0 9Z" fill="#7c7c7c"/></svg><svg style="left:32px;top:3px" width="12" height="10" viewBox="0 0 12 10"><path d="M0 1 Q0 0 1 0 H4.5 L5.8 1.6 H11 Q12 1.6 12 2.6 V9 Q12 10 11 10 H1 Q0 10 0 9Z" fill="#c2c2c2"/></svg><div class="t" style="left:48px;top:0px;color:#d2d2d2;letter-spacing:0.25px">2D Animation</div><svg style="left:19px;top:20px" width="8" height="9"><path d="M0 0 L8 4.5 L0 9Z" fill="#7c7c7c"/></svg><svg style="left:32px;top:19px" width="12" height="10" viewBox="0 0 12 10"><path d="M0 1 Q0 0 1 0 H4.5 L5.8 1.6 H11 Q12 1.6 12 2.6 V9 Q12 10 11 10 H1 Q0 10 0 9Z" fill="#c2c2c2"/></svg><div class="t" style="left:48px;top:16px;color:#d2d2d2;letter-spacing:0.25px">2D Aseprite Importer</div><svg style="left:19px;top:36px" width="8" height="9"><path d="M0 0 L8 4.5 L0 9Z" fill="#7c7c7c"/></svg><svg style="left:32px;top:35px" width="12" height="10" viewBox="0 0 12 10"><path d="M0 1 Q0 0 1 0 H4.5 L5.8 1.6 H11 Q12 1.6 12 2.6 V9 Q12 10 11 10 H1 Q0 10 0 9Z" fill="#c2c2c2"/></svg><div class="t" style="left:48px;top:32px;color:#d2d2d2;letter-spacing:0.25px">2D Common</div><svg style="left:19px;top:52px" width="8" height="9"><path d="M0 0 L8 4.5 L0 9Z" fill="#7c7c7c"/></svg><svg style="left:32px;top:51px" width="12" height="10" viewBox="0 0 12 10"><path d="M0 1 Q0 0 1 0 H4.5 L5.8 1.6 H11 Q12 1.6 12 2.6 V9 Q12 10 11 10 H1 Q0 10 0 9Z" fill="#c2c2c2"/></svg><div class="t" style="left:48px;top:48px;color:#d2d2d2;letter-spacing:0.25px">2D Pixel Perfect</div><svg style="left:19px;top:68px" width="8" height="9"><path d="M0 0 L8 4.5 L0 9Z" fill="#7c7c7c"/></svg><svg style="left:32px;top:67px" width="12" height="10" viewBox="0 0 12 10"><path d="M0 1 Q0 0 1 0 H4.5 L5.8 1.6 H11 Q12 1.6 12 2.6 V9 Q12 10 11 10 H1 Q0 10 0 9Z" fill="#c2c2c2"/></svg><div class="t" style="left:48px;top:64px;color:#d2d2d2;letter-spacing:0.25px">2D PSD Importer</div><svg style="left:19px;top:84px" width="8" height="9"><path d="M0 0 L8 4.5 L0 9Z" fill="#7c7c7c"/></svg><svg style="left:32px;top:83px" width="12" height="10" viewBox="0 0 12 10"><path d="M0 1 Q0 0 1 0 H4.5 L5.8 1.6 H11 Q12 1.6 12 2.6 V9 Q12 10 11 10 H1 Q0 10 0 9Z" fill="#c2c2c2"/></svg><div class="t" style="left:48px;top:80px;color:#d2d2d2;letter-spacing:0.25px">2D Sprite</div><svg style="left:19px;top:100px" width="8" height="9"><path d="M0 0 L8 4.5 L0 9Z" fill="#7c7c7c"/></svg><svg style="left:32px;top:99px" width="12" height="10" viewBox="0 0 12 10"><path d="M0 1 Q0 0 1 0 H4.5 L5.8 1.6 H11 Q12 1.6 12 2.6 V9 Q12 10 11 10 H1 Q0 10 0 9Z" fill="#c2c2c2"/></svg><div class="t" style="left:48px;top:96px;color:#d2d2d2;letter-spacing:0.25px">2D SpriteShape</div><svg style="left:19px;top:116px" width="8" height="9"><path d="M0 0 L8 4.5 L0 9Z" fill="#7c7c7c"/></svg><svg style="left:32px;top:115px" width="12" height="10" viewBox="0 0 12 10"><path d="M0 1 Q0 0 1 0 H4.5 L5.8 1.6 H11 Q12 1.6 12 2.6 V9 Q12 10 11 10 H1 Q0 10 0 9Z" fill="#c2c2c2"/></svg><div class="t" style="left:48px;top:112px;color:#d2d2d2;letter-spacing:0.25px">2D Tilemap Editor</div><svg style="left:19px;top:132px" width="8" height="9"><path d="M0 0 L8 4.5 L0 9Z" fill="#7c7c7c"/></svg><svg style="left:32px;top:131px" width="12" height="10" viewBox="0 0 12 10"><path d="M0 1 Q0 0 1 0 H4.5 L5.8 1.6 H11 Q12 1.6 12 2.6 V9 Q12 10 11 10 H1 Q0 10 0 9Z" fill="#c2c2c2"/></svg><div class="t" style="left:48px;top:128px;color:#d2d2d2;letter-spacing:0.25px">2D Tilemap Extras</div><svg style="left:19px;top:148px" width="8" height="9"><path d="M0 0 L8 4.5 L0 9Z" fill="#7c7c7c"/></svg><svg style="left:32px;top:147px" width="12" height="10" viewBox="0 0 12 10"><path d="M0 1 Q0 0 1 0 H4.5 L5.8 1.6 H11 Q12 1.6 12 2.6 V9 Q12 10 11 10 H1 Q0 10 0 9Z" fill="#c2c2c2"/></svg><div class="t" style="left:48px;top:144px;color:#d2d2d2;letter-spacing:0.25px">Burst</div><svg style="left:19px;top:164px" width="8" height="9"><path d="M0 0 L8 4.5 L0 9Z" fill="#7c7c7c"/></svg><svg style="left:32px;top:163px" width="12" height="10" viewBox="0 0 12 10"><path d="M0 1 Q0 0 1 0 H4.5 L5.8 1.6 H11 Q12 1.6 12 2.6 V9 Q12 10 11 10 H1 Q0 10 0 9Z" fill="#c2c2c2"/></svg><div class="t" style="left:48px;top:160px;color:#d2d2d2;letter-spacing:0.25px">Collections</div><svg style="left:19px;top:180px" width="8" height="9"><path d="M0 0 L8 4.5 L0 9Z" fill="#7c7c7c"/></svg><svg style="left:32px;top:179px" width="12" height="10" viewBox="0 0 12 10"><path d="M0 1 Q0 0 1 0 H4.5 L5.8 1.6 H11 Q12 1.6 12 2.6 V9 Q12 10 11 10 H1 Q0 10 0 9Z" fill="#c2c2c2"/></svg><div class="t" style="left:48px;top:176px;color:#d2d2d2;letter-spacing:0.25px">Custom NUnit</div><svg style="left:19px;top:196px" width="8" height="9"><path d="M0 0 L8 4.5 L0 9Z" fill="#7c7c7c"/></svg><svg style="left:32px;top:195px" width="12" height="10" viewBox="0 0 12 10"><path d="M0 1 Q0 0 1 0 H4.5 L5.8 1.6 H11 Q12 1.6 12 2.6 V9 Q12 10 11 10 H1 Q0 10 0 9Z" fill="#c2c2c2"/></svg><div class="t" style="left:48px;top:192px;color:#d2d2d2;letter-spacing:0.25px">JetBrains Rider Editor</div><svg style="left:19px;top:212px" width="8" height="9"><path d="M0 0 L8 4.5 L0 9Z" fill="#7c7c7c"/></svg><svg style="left:32px;top:211px" width="12" height="10" viewBox="0 0 12 10"><path d="M0 1 Q0 0 1 0 H4.5 L5.8 1.6 H11 Q12 1.6 12 2.6 V9 Q12 10 11 10 H1 Q0 10 0 9Z" fill="#c2c2c2"/></svg><div class="t" style="left:48px;top:208px;color:#d2d2d2;letter-spacing:0.25px">Mathematics</div><svg style="left:19px;top:228px" width="8" height="9"><path d="M0 0 L8 4.5 L0 9Z" fill="#7c7c7c"/></svg><svg style="left:32px;top:227px" width="12" height="10" viewBox="0 0 12 10"><path d="M0 1 Q0 0 1 0 H4.5 L5.8 1.6 H11 Q12 1.6 12 2.6 V9 Q12 10 11 10 H1 Q0 10 0 9Z" fill="#c2c2c2"/></svg><div class="t" style="left:48px;top:224px;color:#d2d2d2;letter-spacing:0.25px">Test Framework</div></div>
<div class="t b" style="left:213px;top:632px;color:#d2d2d2;letter-spacing:0.3px">Assets</div>
<svg style="left:231px;top:673px" width="48" height="41" viewBox="0 0 48 41"><path d="M0 3 Q0 0 3 0 H19.5 Q21 0 22 1.5 L25 8.5 H45 Q48 8.5 48 11.5 V38 Q48 41 45 41 H3 Q0 41 0 38Z" fill="#c2c2c2"/></svg><div class="t" style="left:204px;top:725px;width:100px;text-align:center;font-size:10.5px;color:#c4c4c4">Scenes</div>
<svg style="left:307px;top:673px" width="48" height="41" viewBox="0 0 48 41"><path d="M0 3 Q0 0 3 0 H19.5 Q21 0 22 1.5 L25 8.5 H45 Q48 8.5 48 11.5 V38 Q48 41 45 41 H3 Q0 41 0 38Z" fill="#c2c2c2"/></svg><div class="t" style="left:280px;top:725px;width:100px;text-align:center;font-size:10.5px;color:#c4c4c4">TextMesh ...</div>
<svg style="left:383px;top:665px" width="48" height="56" viewBox="0 0 48 56"><path d="M4 0 H34 L48 14 V52 Q48 56 44 56 H4 Q0 56 0 52 V4 Q0 0 4 0Z" fill="#eeeeee"/><g fill="#277527"><path d="M18.7 11.9 H23.7 L19.5 46.7 H14.3Z"/><path d="M27.3 11.9 H32.4 L27.75 46.7 H23Z"/><rect x="11" y="19.7" width="26" height="4.1"/><rect x="9.3" y="31.9" width="26" height="4.1"/></g></svg><div class="t" style="left:356px;top:725px;width:100px;text-align:center;font-size:10.5px;color:#c4c4c4">Ball Move...</div>
<svg style="left:459px;top:665px" width="48" height="56" viewBox="0 0 48 56"><path d="M4 0 H34 L48 14 V52 Q48 56 44 56 H4 Q0 56 0 52 V4 Q0 0 4 0Z" fill="#eeeeee"/><g fill="#277527"><path d="M18.7 11.9 H23.7 L19.5 46.7 H14.3Z"/><path d="M27.3 11.9 H32.4 L27.75 46.7 H23Z"/><rect x="11" y="19.7" width="26" height="4.1"/><rect x="9.3" y="31.9" width="26" height="4.1"/></g></svg><div class="t" style="left:432px;top:725px;width:100px;text-align:center;font-size:10.5px;color:#c4c4c4">Bounce</div>
<svg style="left:535px;top:665px" width="48" height="56" viewBox="0 0 48 56"><path d="M4 0 H34 L48 14 V52 Q48 56 44 56 H4 Q0 56 0 52 V4 Q0 0 4 0Z" fill="#eeeeee"/><g fill="#277527"><path d="M18.7 11.9 H23.7 L19.5 46.7 H14.3Z"/><path d="M27.3 11.9 H32.4 L27.75 46.7 H23Z"/><rect x="11" y="19.7" width="26" height="4.1"/><rect x="9.3" y="31.9" width="26" height="4.1"/></g></svg><div class="t" style="left:508px;top:725px;width:100px;text-align:center;font-size:10.5px;color:#c4c4c4">Movable</div>
<svg style="left:611px;top:665px" width="48" height="56" viewBox="0 0 48 56"><path d="M4 0 H34 L48 14 V52 Q48 56 44 56 H4 Q0 56 0 52 V4 Q0 0 4 0Z" fill="#eeeeee"/><g fill="#277527"><path d="M18.7 11.9 H23.7 L19.5 46.7 H14.3Z"/><path d="M27.3 11.9 H32.4 L27.75 46.7 H23Z"/><rect x="11" y="19.7" width="26" height="4.1"/><rect x="9.3" y="31.9" width="26" height="4.1"/></g></svg><div class="t" style="left:584px;top:725px;width:100px;text-align:center;font-size:10.5px;color:#c4c4c4">Move Ball</div>
<svg style="left:675px;top:660px" width="70" height="65" viewBox="675 660 70 65"><circle cx="717" cy="681" r="16" fill="#a8f05c"/><path d="M716.4 664.5 Q719 678 733.5 682" fill="none" stroke="#333" stroke-width="2.8"/><path d="M700.5 679.7 Q714.5 682 718 697.5" fill="none" stroke="#333" stroke-width="2.8"/><path d="M693.4 700.5 H734.4 L739.8 721 H682.8Z" fill="#a8f05c" stroke="#a8f05c" stroke-width="0.6" stroke-linejoin="round"/><ellipse cx="717.2" cy="709" rx="10.3" ry="4" fill="#333"/></svg><div class="t" style="left:660px;top:725px;width:100px;text-align:center;font-size:10.5px;color:#c4c4c4">New Physi...</div>
<svg style="left:751px;top:660px" width="70" height="65" viewBox="751 660 70 65"><circle cx="793" cy="681" r="16" fill="#a8f05c"/><path d="M792.4 664.5 Q795 678 809.5 682" fill="none" stroke="#333" stroke-width="2.8"/><path d="M776.5 679.7 Q790.5 682 794 697.5" fill="none" stroke="#333" stroke-width="2.8"/><rect x="759" y="712.8" width="56" height="8.2" fill="#a8f05c"/></svg><div class="t" style="left:736px;top:725px;width:100px;text-align:center;font-size:10.5px;color:#c4c4c4">New Physi...</div>
<svg style="left:839px;top:665px" width="48" height="56" viewBox="0 0 48 56"><path d="M4 0 H34 L48 14 V52 Q48 56 44 56 H4 Q0 56 0 52 V4 Q0 0 4 0Z" fill="#eeeeee"/><g fill="#277527"><path d="M18.7 11.9 H23.7 L19.5 46.7 H14.3Z"/><path d="M27.3 11.9 H32.4 L27.75 46.7 H23Z"/><rect x="11" y="19.7" width="26" height="4.1"/><rect x="9.3" y="31.9" width="26" height="4.1"/></g></svg><div class="t" style="left:812px;top:725px;width:100px;text-align:center;font-size:10.5px;color:#c4c4c4">Player Mo...</div>
<div class="a" style="left:1407px;top:998px;width:55px;height:2px;background:#606060;border-radius:1px"></div><div class="a" style="left:1434px;top:994px;width:10px;height:10px;background:#999999;border-radius:5px"></div>

<!-- INSPECTOR -->
<div class="a" style="left:1480px;top:72px;width:440px;height:19px;background:#282828"></div>
<div class="a" style="left:1480px;top:72px;width:92px;height:19px;background:#3c3c3c;border-radius:4px 4px 0 0"></div>
<div class="a" style="left:1480px;top:91px;width:440px;height:918px;background:#383838"></div>

<div class="a" style="left:0;top:1009px;width:1920px;height:20px;background:#191919"></div>
<!-- inspector content -->
<svg style="left:1489px;top:77px" width="10" height="10" viewBox="0 0 10 10"><circle cx="5" cy="5" r="5" fill="#c4c4c4"/><rect x="4.2" y="4" width="1.6" height="4.2" fill="#3c3c3c"/><rect x="4.2" y="1.8" width="1.6" height="1.5" fill="#3c3c3c"/></svg>
<div class="t" style="left:1504px;top:75px;color:#c4c4c4;letter-spacing:0.2px;">Inspector</div>
<svg style="left:1885px;top:76px" width="9" height="11" viewBox="0 0 9 11"><path d="M1.3 2.4 Q2.2 0.6 4.2 0.6 Q6.6 0.6 6.6 3 V5.6" fill="none" stroke="#c4c4c4" stroke-width="1.1"/><rect x="0.6" y="5.6" width="7.8" height="4.6" rx="0.6" fill="none" stroke="#c4c4c4" stroke-width="1.1"/></svg>
<svg style="left:1904px;top:76px" width="3" height="11"><rect x="0.5" y="0.3" width="2" height="2" fill="#c4c4c4"/><rect x="0.5" y="4.3" width="2" height="2" fill="#c4c4c4"/><rect x="0.5" y="8.3" width="2" height="2" fill="#c4c4c4"/></svg>
<div class="a" style="left:1480px;top:91px;width:427px;height:59px;background:#3e3e3e"></div>
<div class="a" style="left:1480px;top:150px;width:427px;height:1px;background:#1f1f1f"></div>
<div class="a" style="left:1907px;top:91px;width:13px;height:736px;background:#2e2e2e"></div>
<svg style="left:1910px;top:97px" width="8" height="5"><path d="M0 5 H8 L4 0Z" fill="#c4c4c4"/></svg>
<div class="a" style="left:1909px;top:108px;width:10px;height:549px;background:#5f5f5f;border-radius:5px"></div>
<svg style="left:1910px;top:818px" width="8" height="5"><path d="M0 0 H8 L4 5Z" fill="#c4c4c4"/></svg>
<svg style="left:1487px;top:101px" width="22" height="22" viewBox="0 0 22 22"><path d="M11 1 L20.5 5.8 V16.2 L11 21 L1.5 16.2 V5.8 Z M1.5 5.8 L11 10.6 L20.5 5.8 M11 10.6 V21" fill="none" stroke="#c4c4c4" stroke-width="1.3" stroke-linejoin="round"/></svg>
<svg style="left:1506px;top:122px" width="8" height="5"><path d="M0 0 H8 L4 5Z" fill="#c4c4c4"/></svg>
<div class="chk" style="left:1527px;top:102px"></div>
<svg style="left:1530px;top:105px" width="9" height="8" viewBox="0 0 9 8"><path d="M0.8 4.2 L3.3 6.6 L8.2 1" fill="none" stroke="#e0e0e0" stroke-width="1.6"/></svg>
<div class="fld" style="left:1547px;top:100px;width:280px;height:18px"></div>
<div class="t" style="left:1550px;top:102px;color:#e4e4e4;letter-spacing:0.2px;font-weight:bold">Player Score</div>
<div class="chk" style="left:1831px;top:102px"></div>
<div class="t" style="left:1848px;top:102px;color:#c4c4c4;letter-spacing:0.2px;">Static</div>
<svg style="left:1893px;top:107px" width="8" height="5"><path d="M0 0 H8 L4 5Z" fill="#c4c4c4"/></svg>
<div class="t" style="left:1520px;top:125px;color:#c4c4c4;letter-spacing:0.2px;">Tag</div>
<div class="dd" style="left:1546px;top:125px;width:158px;height:16px"></div>
<div class="t" style="left:1549px;top:125px;color:#d8d8d8;letter-spacing:0.2px;">Untagged</div>
<svg style="left:1692px;top:131px" width="8" height="5"><path d="M0 0 H8 L4 5Z" fill="#c4c4c4"/></svg>
<div class="t" style="left:1718px;top:125px;color:#c4c4c4;letter-spacing:0.2px;">Layer</div>
<div class="dd" style="left:1755px;top:125px;width:147px;height:16px"></div>
<div class="t" style="left:1758px;top:125px;color:#d8d8d8;letter-spacing:0.2px;">UI</div>
<svg style="left:1890px;top:131px" width="8" height="5"><path d="M0 0 H8 L4 5Z" fill="#c4c4c4"/></svg>
<div class="a" style="left:1480px;top:151px;width:427px;height:20px;background:#3e3e3e"></div>
<div class="a" style="left:1480px;top:171px;width:427px;height:1px;background:#353535"></div>
<svg style="left:1487px;top:158px" width="8" height="8"><path d="M0 0 H8 L4.0 8Z" fill="#7c7c7c"/></svg>
<svg style="left:1502px;top:155px" width="13" height="13" viewBox="0 0 13 13"><path d="M5.2 5.2 L0.8 3 L3 0.8Z M7.8 5.2 L12.2 3 L10 0.8Z M5.2 7.8 L0.8 10 L3 12.2Z M7.8 7.8 L12.2 10 L10 12.2Z" fill="#d0d0d0" stroke="#d0d0d0" stroke-width="1.2" stroke-linejoin="round"/></svg>
<div class="t" style="left:1540px;top:154px;color:#e0e0e0;letter-spacing:0.2px;font-weight:bold">Rect Transform</div>
<svg style="left:1849px;top:156px" width="11" height="11" viewBox="0 0 11 11"><circle cx="5.5" cy="5.5" r="5.2" fill="#d0d0d0"/><path d="M3.6 4.2 Q3.6 2.3 5.5 2.3 Q7.4 2.3 7.4 4 Q7.4 5.2 5.8 5.8 V6.8" fill="none" stroke="#3e3e3e" stroke-width="1.4"/><rect x="5" y="7.6" width="1.5" height="1.4" fill="#3e3e3e"/></svg>
<svg style="left:1869px;top:156px" width="11" height="11" viewBox="0 0 11 11"><path d="M0 3.3 H11 M0 8.3 H11" stroke="#d0d0d0" stroke-width="1.2"/><rect x="6.5" y="0.8" width="2" height="5" fill="#d0d0d0"/><rect x="3" y="5.8" width="2" height="5" fill="#d0d0d0"/></svg>
<svg style="left:1893px;top:156px" width="3" height="11"><rect x="0.5" y="0.3" width="2" height="2" fill="#c4c4c4"/><rect x="0.5" y="4.3" width="2" height="2" fill="#c4c4c4"/><rect x="0.5" y="8.3" width="2" height="2" fill="#c4c4c4"/></svg>
<div class="t" style="left:1508px;top:179px;font-size:10.5px;color:#c4c4c4;letter-spacing:0.3px">center</div>
<div class="t" style="left:1479px;top:211px;width:32px;text-align:center;font-size:10.5px;color:#c4c4c4;letter-spacing:0.3px;transform:rotate(-90deg)">middle</div>
<svg style="left:1507px;top:200px" width="36" height="36" viewBox="0 0 36 36"><rect x="0.5" y="0.5" width="34" height="34" fill="none" stroke="#7a7a7a" stroke-width="1"/><path d="M17.5 1 V34 M1 17.5 H34" stroke="#d9534f" stroke-width="1"/><rect x="9.5" y="9.5" width="16" height="16" fill="none" stroke="#b4b4b4" stroke-width="1.1"/><rect x="16" y="16" width="3" height="3" fill="#e8a400"/></svg>
<div class="t" style="left:1650px;top:180px;color:#c4c4c4;letter-spacing:0.2px;">Pos X</div>
<div class="t" style="left:1735px;top:180px;color:#c4c4c4;letter-spacing:0.2px;">Pos Y</div>
<div class="t" style="left:1821px;top:180px;color:#c4c4c4;letter-spacing:0.2px;">Pos Z</div>
<div class="fld" style="left:1650px;top:196px;width:82px;height:18px"></div>
<div class="t" style="left:1653px;top:198px;color:#d2d2d2;letter-spacing:0.2px;">-100</div>
<div class="fld" style="left:1735px;top:196px;width:82px;height:18px"></div>
<div class="t" style="left:1738px;top:198px;color:#d2d2d2;letter-spacing:0.2px;">250</div>
<div class="fld" style="left:1820px;top:196px;width:83px;height:18px"></div>
<div class="t" style="left:1823px;top:198px;color:#d2d2d2;letter-spacing:0.2px;">0</div>
<div class="t" style="left:1650px;top:216px;color:#c4c4c4;letter-spacing:0.2px;">Width</div>
<div class="t" style="left:1735px;top:216px;color:#c4c4c4;letter-spacing:0.2px;">Height</div>
<div class="fld" style="left:1650px;top:232px;width:82px;height:18px"></div>
<div class="t" style="left:1653px;top:234px;color:#d2d2d2;letter-spacing:0.2px;">200</div>
<div class="fld" style="left:1735px;top:232px;width:82px;height:18px"></div>
<div class="t" style="left:1738px;top:234px;color:#d2d2d2;letter-spacing:0.2px;">140</div>
<div class="a" style="left:1852px;top:231px;width:24px;height:18px;background:#4f4f4f;border-radius:3px 0 0 3px"></div>
<div class="a" style="left:1877px;top:231px;width:25px;height:18px;background:#585858;border-radius:0 3px 3px 0"></div>
<svg style="left:1859px;top:235px" width="11" height="11"><rect x="0.5" y="0.5" width="10" height="10" fill="none" stroke="#b0b0b0" stroke-width="1" stroke-dasharray="2 2"/></svg>
<div class="t" style="left:1885px;top:232px;color:#b0b0b0;letter-spacing:0.2px;">R</div>
<svg style="left:1487px;top:259px" width="8" height="7"><path d="M0 0 H8 L4.0 7Z" fill="#7c7c7c"/></svg>
<div class="t" style="left:1499px;top:254px;color:#d2d2d2;letter-spacing:0.2px;">Anchors</div>
<div class="t" style="left:1514px;top:272px;color:#d2d2d2;letter-spacing:0.2px;">Min</div>
<div class="t" style="left:1650px;top:272px;color:#c4c4c4;letter-spacing:0.2px;">X</div>
<div class="fld" style="left:1661px;top:270px;width:71px;height:18px"></div>
<div class="t" style="left:1664px;top:272px;color:#d2d2d2;letter-spacing:0.2px;">0.5</div>
<div class="t" style="left:1735px;top:272px;color:#c4c4c4;letter-spacing:0.2px;">Y</div>
<div class="fld" style="left:1746px;top:270px;width:71px;height:18px"></div>
<div class="t" style="left:1749px;top:272px;color:#d2d2d2;letter-spacing:0.2px;">0.5</div>
<div class="t" style="left:1514px;top:292px;color:#d2d2d2;letter-spacing:0.2px;">Max</div>
<div class="t" style="left:1650px;top:292px;color:#c4c4c4;letter-spacing:0.2px;">X</div>
<div class="fld" style="left:1661px;top:290px;width:71px;height:18px"></div>
<div class="t" style="left:1664px;top:292px;color:#d2d2d2;letter-spacing:0.2px;">0.5</div>
<div class="t" style="left:1735px;top:292px;color:#c4c4c4;letter-spacing:0.2px;">Y</div>
<div class="fld" style="left:1746px;top:290px;width:71px;height:18px"></div>
<div class="t" style="left:1749px;top:292px;color:#d2d2d2;letter-spacing:0.2px;">0.5</div>
<div class="t" style="left:1499px;top:314px;color:#d2d2d2;letter-spacing:0.2px;">Pivot</div>
<div class="t" style="left:1650px;top:314px;color:#c4c4c4;letter-spacing:0.2px;">X</div>
<div class="fld" style="left:1661px;top:312px;width:71px;height:18px"></div>
<div class="t" style="left:1664px;top:314px;color:#d2d2d2;letter-spacing:0.2px;">0.5</div>
<div class="t" style="left:1735px;top:314px;color:#c4c4c4;letter-spacing:0.2px;">Y</div>
<div class="fld" style="left:1746px;top:312px;width:71px;height:18px"></div>
<div class="t" style="left:1749px;top:314px;color:#d2d2d2;letter-spacing:0.2px;">0.5</div>
<div class="t" style="left:1499px;top:342px;color:#d2d2d2;letter-spacing:0.2px;">Rotation</div>
<div class="t" style="left:1653px;top:341px;color:#c4c4c4;letter-spacing:0.2px;">X</div>
<div class="fld" style="left:1667px;top:340px;width:66px;height:18px"></div>
<div class="t" style="left:1670px;top:342px;color:#d2d2d2;letter-spacing:0.2px;">0</div>
<div class="t" style="left:1738px;top:341px;color:#c4c4c4;letter-spacing:0.2px;">Y</div>
<div class="fld" style="left:1752px;top:340px;width:66px;height:18px"></div>
<div class="t" style="left:1755px;top:342px;color:#d2d2d2;letter-spacing:0.2px;">0</div>
<div class="t" style="left:1823px;top:341px;color:#c4c4c4;letter-spacing:0.2px;">Z</div>
<div class="fld" style="left:1837px;top:340px;width:66px;height:18px"></div>
<div class="t" style="left:1840px;top:342px;color:#d2d2d2;letter-spacing:0.2px;">0</div>
<div class="t" style="left:1499px;top:362px;color:#d2d2d2;letter-spacing:0.2px;">Scale</div>
<div class="t" style="left:1653px;top:361px;color:#c4c4c4;letter-spacing:0.2px;">X</div>
<div class="fld" style="left:1667px;top:360px;width:66px;height:18px"></div>
<div class="t" style="left:1670px;top:362px;color:#d2d2d2;letter-spacing:0.2px;">1</div>
<div class="t" style="left:1738px;top:361px;color:#c4c4c4;letter-spacing:0.2px;">Y</div>
<div class="fld" style="left:1752px;top:360px;width:66px;height:18px"></div>
<div class="t" style="left:1755px;top:362px;color:#d2d2d2;letter-spacing:0.2px;">1</div>
<div class="t" style="left:1823px;top:361px;color:#c4c4c4;letter-spacing:0.2px;">Z</div>
<div class="fld" style="left:1837px;top:360px;width:66px;height:18px"></div>
<div class="t" style="left:1840px;top:362px;color:#d2d2d2;letter-spacing:0.2px;">1</div>
<svg style="left:1631px;top:364px" width="13" height="10" viewBox="0 0 13 10"><path d="M5 2 H3.5 Q0.8 2 0.8 5 Q0.8 8 3.5 8 H5 M8 2 H9.5 Q12.2 2 12.2 5 Q12.2 8 9.5 8 H8" fill="none" stroke="#b8b8b8" stroke-width="1.2"/><path d="M1.5 0.5 L11.5 9.5" stroke="#b8b8b8" stroke-width="1.1"/></svg>
<div class="a" style="left:1480px;top:387px;width:427px;height:1px;background:#1f1f1f"></div>
<div class="a" style="left:1480px;top:388px;width:427px;height:20px;background:#3e3e3e"></div>
<div class="a" style="left:1480px;top:408px;width:427px;height:1px;background:#353535"></div>
<svg style="left:1487px;top:395px" width="8" height="8"><path d="M0 0 H8 L4.0 8Z" fill="#7c7c7c"/></svg>
<svg style="left:1500px;top:392px" width="16" height="13" viewBox="0 0 16 13"><path d="M0.8 6.5 Q8 -1.5 15.2 6.5 Q8 14.5 0.8 6.5Z" fill="none" stroke="#d0d0d0" stroke-width="1.3"/><circle cx="8" cy="6.5" r="2.6" fill="none" stroke="#d0d0d0" stroke-width="1.3"/></svg>
<div class="t" style="left:1540px;top:391px;color:#e0e0e0;letter-spacing:0.2px;font-weight:bold">Canvas Renderer</div>
<svg style="left:1849px;top:393px" width="11" height="11" viewBox="0 0 11 11"><circle cx="5.5" cy="5.5" r="5.2" fill="#d0d0d0"/><path d="M3.6 4.2 Q3.6 2.3 5.5 2.3 Q7.4 2.3 7.4 4 Q7.4 5.2 5.8 5.8 V6.8" fill="none" stroke="#3e3e3e" stroke-width="1.4"/><rect x="5" y="7.6" width="1.5" height="1.4" fill="#3e3e3e"/></svg>
<svg style="left:1869px;top:393px" width="11" height="11" viewBox="0 0 11 11"><path d="M0 3.3 H11 M0 8.3 H11" stroke="#d0d0d0" stroke-width="1.2"/><rect x="6.5" y="0.8" width="2" height="5" fill="#d0d0d0"/><rect x="3" y="5.8" width="2" height="5" fill="#d0d0d0"/></svg>
<svg style="left:1893px;top:393px" width="3" height="11"><rect x="0.5" y="0.3" width="2" height="2" fill="#c4c4c4"/><rect x="0.5" y="4.3" width="2" height="2" fill="#c4c4c4"/><rect x="0.5" y="8.3" width="2" height="2" fill="#c4c4c4"/></svg>
<div class="t" style="left:1499px;top:415px;color:#d2d2d2;letter-spacing:0.2px;">Cull Transparent Mesh</div>
<div class="chk" style="left:1652px;top:415px"></div>
<svg style="left:1655px;top:418px" width="9" height="8" viewBox="0 0 9 8"><path d="M0.8 4.2 L3.3 6.6 L8.2 1" fill="none" stroke="#e0e0e0" stroke-width="1.6"/></svg>
<div class="a" style="left:1480px;top:440px;width:427px;height:1px;background:#1f1f1f"></div>
<div class="a" style="left:1480px;top:441px;width:427px;height:20px;background:#3e3e3e"></div>
<div class="a" style="left:1480px;top:461px;width:427px;height:1px;background:#353535"></div>
<svg style="left:1487px;top:448px" width="8" height="8"><path d="M0 0 H8 L4.0 8Z" fill="#7c7c7c"/></svg>
<svg style="left:1502px;top:445px" width="13" height="13" viewBox="0 0 13 13"><rect x="0" y="0" width="13" height="13" rx="1" fill="#c8c8c8"/><path d="M3 3 H10 M6.5 3 V10.5" stroke="#3e3e3e" stroke-width="1.6"/></svg>
<div class="chk" style="left:1520px;top:444px"></div>
<svg style="left:1523px;top:447px" width="9" height="8" viewBox="0 0 9 8"><path d="M0.8 4.2 L3.3 6.6 L8.2 1" fill="none" stroke="#e0e0e0" stroke-width="1.6"/></svg>
<div class="t" style="left:1540px;top:444px;color:#e0e0e0;letter-spacing:0.2px;font-weight:bold">Text</div>
<svg style="left:1849px;top:446px" width="11" height="11" viewBox="0 0 11 11"><circle cx="5.5" cy="5.5" r="5.2" fill="#d0d0d0"/><path d="M3.6 4.2 Q3.6 2.3 5.5 2.3 Q7.4 2.3 7.4 4 Q7.4 5.2 5.8 5.8 V6.8" fill="none" stroke="#3e3e3e" stroke-width="1.4"/><rect x="5" y="7.6" width="1.5" height="1.4" fill="#3e3e3e"/></svg>
<svg style="left:1869px;top:446px" width="11" height="11" viewBox="0 0 11 11"><path d="M0 3.3 H11 M0 8.3 H11" stroke="#d0d0d0" stroke-width="1.2"/><rect x="6.5" y="0.8" width="2" height="5" fill="#d0d0d0"/><rect x="3" y="5.8" width="2" height="5" fill="#d0d0d0"/></svg>
<svg style="left:1893px;top:446px" width="3" height="11"><rect x="0.5" y="0.3" width="2" height="2" fill="#c4c4c4"/><rect x="0.5" y="4.3" width="2" height="2" fill="#c4c4c4"/><rect x="0.5" y="8.3" width="2" height="2" fill="#c4c4c4"/></svg>
<div class="t" style="left:1499px;top:468px;color:#d2d2d2;letter-spacing:0.2px;">Text</div>
<div class="fld" style="left:1498px;top:484px;width:405px;height:47px"></div>
<div class="t" style="left:1502px;top:486px;color:#d2d2d2;letter-spacing:0.2px;">0</div>
<div class="t" style="left:1499px;top:536px;color:#d2d2d2;letter-spacing:0.2px;font-weight:bold">Character</div>
<div class="t" style="left:1514px;top:556px;color:#d2d2d2;letter-spacing:0.2px;">Font</div>
<div class="fld" style="left:1652px;top:554px;width:251px;height:18px"></div>
<div class="t" style="left:1655px;top:559px;font-size:8px;line-height:10px;color:#c4c4c4;font-weight:bold;letter-spacing:-0.3px">Aa</div>
<div class="t" style="left:1668px;top:556px;color:#d2d2d2;letter-spacing:0.2px;">LegacyRuntime</div>
<div class="a" style="left:1884px;top:555px;width:18px;height:16px;background:#303030;border-radius:0 3px 3px 0"></div>
<svg style="left:1888px;top:557px" width="11" height="11" viewBox="0 0 11 11"><circle cx="5.5" cy="5.5" r="4.8" fill="none" stroke="#c4c4c4" stroke-width="1.2"/><circle cx="5.5" cy="5.5" r="2" fill="#c4c4c4"/></svg>
<div class="t" style="left:1514px;top:576px;color:#d2d2d2;letter-spacing:0.2px;">Font Style</div>
<div class="dd" style="left:1653px;top:575px;width:249px;height:17px"></div>
<div class="t" style="left:1656px;top:575px;color:#d8d8d8;letter-spacing:0.2px;">Normal</div>
<svg style="left:1890px;top:581px" width="8" height="5"><path d="M0 0 H8 L4 5Z" fill="#c4c4c4"/></svg>
<div class="t" style="left:1514px;top:596px;color:#d2d2d2;letter-spacing:0.2px;">Font Size</div>
<div class="fld" style="left:1652px;top:594px;width:251px;height:18px"></div>
<div class="t" style="left:1655px;top:596px;color:#d2d2d2;letter-spacing:0.2px;">14</div>
<div class="t" style="left:1514px;top:616px;color:#d2d2d2;letter-spacing:0.2px;">Line Spacing</div>
<div class="fld" style="left:1652px;top:614px;width:251px;height:18px"></div>
<div class="t" style="left:1655px;top:616px;color:#d2d2d2;letter-spacing:0.2px;">1</div>
<div class="t" style="left:1514px;top:636px;color:#d2d2d2;letter-spacing:0.2px;">Rich Text</div>
<div class="chk" style="left:1652px;top:636px"></div>
<svg style="left:1655px;top:639px" width="9" height="8" viewBox="0 0 9 8"><path d="M0.8 4.2 L3.3 6.6 L8.2 1" fill="none" stroke="#e0e0e0" stroke-width="1.6"/></svg>
<div class="t" style="left:1499px;top:656px;color:#d2d2d2;letter-spacing:0.2px;font-weight:bold">Paragraph</div>
<div class="t" style="left:1514px;top:676px;color:#d2d2d2;letter-spacing:0.2px;">Alignment</div>
<div class="a" style="left:1653px;top:675px;width:18px;height:17px;background:#585858;border-radius:3px 0 0 3px"></div>
<svg style="left:1653px;top:675px" width="18" height="17"><path d="M4.0 3.5 H14.0 M4.0 6.0 H11.0 M4.0 8.5 H14.0 M4.0 11.0 H11.0" stroke="#c4c4c4" stroke-width="1"/></svg>
<div class="a" style="left:1672px;top:675px;width:19px;height:17px;background:#46607c;border-radius:0"></div>
<svg style="left:1672px;top:675px" width="19" height="17"><path d="M4.5 3.5 H14.5 M6.0 6.0 H13.0 M4.5 8.5 H14.5 M6.0 11.0 H13.0" stroke="#f0f0f0" stroke-width="1"/></svg>
<div class="a" style="left:1692px;top:675px;width:19px;height:17px;background:#585858;border-radius:0 3px 3px 0"></div>
<svg style="left:1692px;top:675px" width="19" height="17"><path d="M4.5 3.5 H14.5 M7.5 6.0 H14.5 M4.5 8.5 H14.5 M7.5 11.0 H14.5" stroke="#c4c4c4" stroke-width="1"/></svg>
<div class="a" style="left:1671px;top:675px;width:1px;height:17px;background:#3a3a3a"></div><div class="a" style="left:1691px;top:675px;width:1px;height:17px;background:#3a3a3a"></div>
<div class="a" style="left:1723px;top:675px;width:17px;height:17px;background:#585858;border-radius:3px 0 0 3px"></div>
<svg style="left:1723px;top:675px" width="17" height="17"><path d="M3.5 4.0 H13.5 M3.5 6.5 H13.5 M3.5 9.0 H13.5" stroke="#c4c4c4" stroke-width="1"/></svg>
<div class="a" style="left:1741px;top:675px;width:19px;height:17px;background:#46607c;border-radius:0"></div>
<svg style="left:1741px;top:675px" width="19" height="17"><path d="M4.5 6.5 H14.5 M4.5 9.0 H14.5 M4.5 11.5 H14.5" stroke="#f0f0f0" stroke-width="1"/></svg>
<div class="a" style="left:1761px;top:675px;width:20px;height:17px;background:#585858;border-radius:0 3px 3px 0"></div>
<svg style="left:1761px;top:675px" width="20" height="17"><path d="M5.0 9.0 H15.0 M5.0 11.5 H15.0 M5.0 14.0 H15.0" stroke="#c4c4c4" stroke-width="1"/></svg>
<div class="a" style="left:1740px;top:675px;width:1px;height:17px;background:#3a3a3a"></div><div class="a" style="left:1760px;top:675px;width:1px;height:17px;background:#3a3a3a"></div>
<div class="t" style="left:1514px;top:696px;color:#d2d2d2;letter-spacing:0.2px;">Align By Geometry</div>
<div class="chk" style="left:1652px;top:696px"></div>
<div class="t" style="left:1514px;top:716px;color:#d2d2d2;letter-spacing:0.2px;">Horizontal Overflow</div>
<div class="dd" style="left:1653px;top:715px;width:249px;height:17px"></div>
<div class="t" style="left:1656px;top:715px;color:#d8d8d8;letter-spacing:0.2px;">Wrap</div>
<svg style="left:1890px;top:721px" width="8" height="5"><path d="M0 0 H8 L4 5Z" fill="#c4c4c4"/></svg>
<div class="t" style="left:1514px;top:736px;color:#d2d2d2;letter-spacing:0.2px;">Vertical Overflow</div>
<div class="dd" style="left:1653px;top:735px;width:249px;height:17px"></div>
<div class="t" style="left:1656px;top:735px;color:#d8d8d8;letter-spacing:0.2px;">Truncate</div>
<svg style="left:1890px;top:741px" width="8" height="5"><path d="M0 0 H8 L4 5Z" fill="#c4c4c4"/></svg>
<div class="t" style="left:1514px;top:756px;color:#d2d2d2;letter-spacing:0.2px;">Best Fit</div>
<div class="chk" style="left:1652px;top:756px"></div>
<svg style="left:1655px;top:759px" width="9" height="8" viewBox="0 0 9 8"><path d="M0.8 4.2 L3.3 6.6 L8.2 1" fill="none" stroke="#e0e0e0" stroke-width="1.6"/></svg>
<div class="t" style="left:1514px;top:776px;color:#d2d2d2;letter-spacing:0.2px;">Min Size</div>
<div class="fld" style="left:1652px;top:774px;width:251px;height:18px"></div>
<div class="t" style="left:1655px;top:776px;color:#d2d2d2;letter-spacing:0.2px;">10</div>
<div class="t" style="left:1514px;top:796px;color:#d2d2d2;letter-spacing:0.2px;">Max Size</div>
<div class="fld" style="left:1652px;top:794px;width:251px;height:18px"></div>
<div class="t" style="left:1655px;top:796px;color:#d2d2d2;letter-spacing:0.2px;">250</div>
<div class="a" style="left:1480px;top:812px;width:427px;height:15px;overflow:hidden"><div class="t" style="left:19px;top:2px;color:#d2d2d2;letter-spacing:0.2px">Color</div><div class="a" style="left:173px;top:1px;width:231px;height:15px;background:#ffffff;border-radius:2px"></div><div class="a" style="left:173px;top:14px;width:45px;height:1px;background:#ffffff"></div></div>
<svg style="left:1887px;top:814px" width="12" height="12" viewBox="0 0 12 12"><path d="M1 11 L7 5" stroke="#c4c4c4" stroke-width="1.6"/><path d="M6 3 L9 0.8 Q10.5 -0.3 11.4 0.6 Q12.3 1.5 11.2 3 L9 6Z" fill="#c4c4c4"/></svg>
<div class="a" style="left:1480px;top:827px;width:440px;height:1px;background:#1f1f1f"></div>
<div class="a" style="left:1480px;top:828px;width:440px;height:20px;background:#3e3e3e"></div>
<div class="a" style="left:1484px;top:828px;width:1px;height:20px;background:#303030"></div>
<div class="t" style="left:1488px;top:831px;color:#d2d2d2;letter-spacing:0.2px;font-weight:bold">Default UI Material</div>
<svg style="left:1601px;top:835px" width="8" height="5"><path d="M0 0 H8 L4 5Z" fill="#c4c4c4"/></svg>
<div class="a" style="left:1612px;top:828px;width:1px;height:20px;background:#303030"></div>
<div class="a" style="left:1617px;top:836px;width:284px;height:1px;background:#6a6a6a"></div><div class="a" style="left:1617px;top:839px;width:284px;height:1px;background:#6a6a6a"></div>
<div class="a" style="left:1904px;top:828px;width:1px;height:20px;background:#303030"></div>
<svg style="left:1911px;top:833px" width="3" height="11"><rect x="0.5" y="0.3" width="2" height="2" fill="#c4c4c4"/><rect x="0.5" y="4.3" width="2" height="2" fill="#c4c4c4"/><rect x="0.5" y="8.3" width="2" height="2" fill="#c4c4c4"/></svg>
<div class="a" style="left:1480px;top:848px;width:440px;height:1px;background:#2a2a2a"></div>
<div class="a" style="left:1480px;top:849px;width:440px;height:153px;background:#303030"></div>
<div class="a" style="left:1642px;top:868px;width:116px;height:116px;background:#ffffff"></div>
<div class="a" style="left:1480px;top:1002px;width:440px;height:1px;background:#1f1f1f"></div>
<svg style="left:1820px;top:1014px" width="15" height="15" viewBox="0 0 15 15"><ellipse cx="7.5" cy="8.5" rx="4" ry="5" fill="#c4c4c4"/><path d="M1 4 L4 6 M14 4 L11 6 M0.5 9 H3.5 M14.5 9 H11.5 M1.5 14 L4 11.5 M13.5 14 L11 11.5 M5 2 L6 3.8 M10 2 L9 3.8" stroke="#c4c4c4" stroke-width="1.2"/><path d="M1 1 L14 14" stroke="#191919" stroke-width="2.5"/><path d="M1.5 1.5 L13.5 13.5" stroke="#c4c4c4" stroke-width="1"/></svg>
<svg style="left:1846px;top:1014px" width="15" height="15" viewBox="0 0 15 15"><ellipse cx="7.5" cy="3" rx="6" ry="2.5" fill="#c4c4c4"/><path d="M1.5 5.5 Q7.5 9 13.5 5.5 V7.5 Q7.5 11 1.5 7.5Z M1.5 9.5 Q7.5 13 13.5 9.5 V11.5 Q7.5 15 1.5 11.5Z" fill="#c4c4c4"/><path d="M3 1 L14 14" stroke="#191919" stroke-width="2.2"/><path d="M3.5 1.5 L13.5 13.5" stroke="#c4c4c4" stroke-width="1"/></svg>
<svg style="left:1873px;top:1014px" width="15" height="15" viewBox="0 0 15 15"><circle cx="7.5" cy="7.5" r="5.5" fill="none" stroke="#c4c4c4" stroke-width="1.3"/><path d="M4 7.5 Q7.5 3.5 11 7.5 Q7.5 11.5 4 7.5Z" fill="#c4c4c4"/><path d="M1 1 L14 14" stroke="#191919" stroke-width="2.2"/><path d="M1.5 1.5 L13.5 13.5" stroke="#c4c4c4" stroke-width="1"/></svg>
<svg style="left:1899px;top:1014px" width="15" height="15" viewBox="0 0 15 15"><circle cx="7.5" cy="7.5" r="6.6" fill="none" stroke="#c4c4c4" stroke-width="1.2"/><path d="M4.3 7.6 L6.6 9.9 L10.8 5.3" fill="none" stroke="#c4c4c4" stroke-width="1.4"/></svg>
<div class="a" style="left:1815px;top:1011px;width:1px;height:18px;background:#2c2c2c"></div><div class="a" style="left:1841px;top:1011px;width:1px;height:18px;background:#2c2c2c"></div><div class="a" style="left:1867px;top:1011px;width:1px;height:18px;background:#2c2c2c"></div><div class="a" style="left:1894px;top:1011px;width:1px;height:18px;background:#2c2c2c"></div>

<!-- status bar -->

</body></html>
